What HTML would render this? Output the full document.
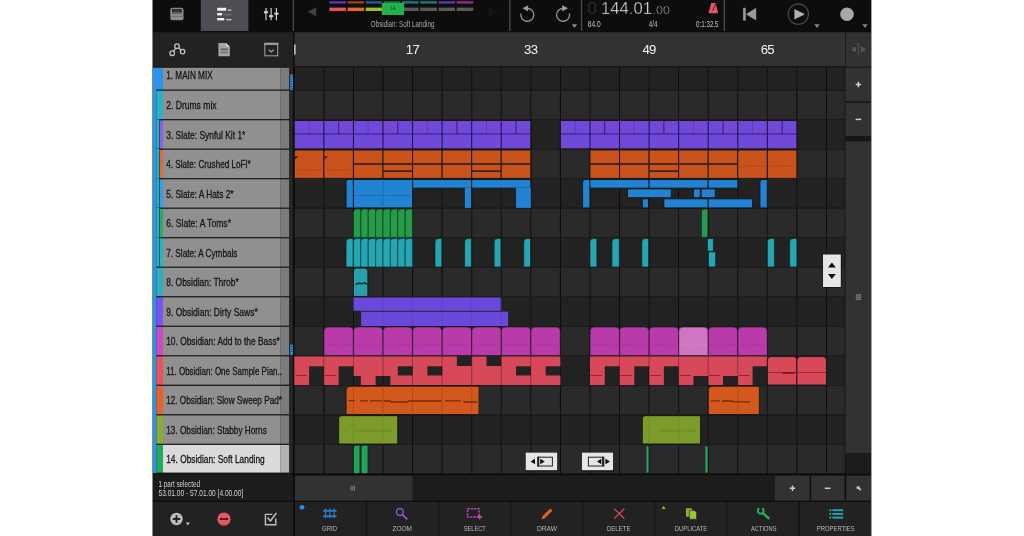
<!DOCTYPE html>
<html lang="en"><head><meta charset="utf-8"><title>Arrange</title>
<style>html,body{margin:0;padding:0;background:#fff;width:1024px;height:536px;overflow:hidden}svg{display:block;position:absolute;left:0;top:0}text{font-family:"Liberation Sans",sans-serif}</style>
</head><body>
<svg width="1024" height="536" viewBox="0 0 1024 536">
<defs><filter id="soft" x="0" y="0" width="1024" height="536" filterUnits="userSpaceOnUse"><feGaussianBlur stdDeviation="0.45"/></filter></defs>
<g filter="url(#soft)">
<rect x="0.00" y="0.00" width="1024.00" height="536.00" fill="#ffffff" />
<rect x="152.50" y="0.00" width="718.90" height="536.00" fill="#121212" />
<rect x="153.00" y="0.00" width="718.00" height="31.00" fill="#0a0a0a" />
<rect x="153.00" y="31.00" width="718.00" height="0.80" fill="#050505" />
<rect x="200.70" y="0.00" width="47.70" height="31.00" fill="#4e4e52" />
<rect x="292.70" y="0.00" width="1.40" height="31.00" fill="#4a4a4a" />
<rect x="509.10" y="0.00" width="1.40" height="31.00" fill="#4a4a4a" />
<rect x="580.80" y="0.00" width="1.40" height="31.00" fill="#4a4a4a" />
<rect x="723.60" y="0.00" width="1.40" height="31.00" fill="#4a4a4a" />
<g id="topicons">
<rect x="170.3" y="7.7" width="13.2" height="12.6" rx="2" fill="#8c8c8c"/>
<rect x="172.10" y="9.20" width="9.60" height="4.30" fill="#0b0b0b" />
<rect x="172.90" y="10.50" width="8.00" height="0.90" fill="#6e6e6e" />
<rect x="172.10" y="12.40" width="9.60" height="1.10" fill="#8c8c8c" />
<rect x="170.30" y="15.90" width="13.20" height="0.90" fill="#6a6a6a" />
<rect x="217.20" y="7.80" width="9.00" height="2.90" fill="#f2f2f2" />
<rect x="227.80" y="9.60" width="3.60" height="1.10" fill="#e0e0e0" />
<rect x="217.20" y="13.00" width="4.80" height="2.40" fill="#f2f2f2" />
<rect x="223.00" y="13.60" width="8.40" height="1.80" fill="#6a6a6e" />
<rect x="217.20" y="18.00" width="7.00" height="2.40" fill="#f2f2f2" />
<rect x="226.20" y="19.10" width="5.20" height="1.20" fill="#d8d8d8" />
<g stroke="#cfcfcf" stroke-width="1.2" fill="none"><path d="M266,7.9v12.4M271.1,7.9v12.4M276.4,7.9v12.4"/></g>
<g fill="#d4d4d4"><rect x="263.9" y="11.2" width="4.2" height="2.1"/><rect x="269" y="15.1" width="4.2" height="2.1"/><rect x="274.3" y="12.6" width="4.2" height="2.1"/></g>
</g>
<rect x="329.30" y="1.20" width="16.60" height="2.40" fill="#5a3aa8" />
<rect x="347.50" y="1.20" width="16.60" height="2.40" fill="#9a4516" />
<rect x="365.70" y="1.20" width="16.60" height="2.40" fill="#1b5f96" />
<rect x="383.90" y="1.20" width="16.60" height="2.40" fill="#1d7a3c" />
<rect x="402.10" y="1.20" width="16.60" height="2.40" fill="#1c7a80" />
<rect x="420.30" y="1.20" width="16.60" height="2.40" fill="#1c7a80" />
<rect x="438.50" y="1.20" width="16.60" height="2.40" fill="#5a3aa8" />
<rect x="456.70" y="1.20" width="16.60" height="2.40" fill="#8e2f82" />
<rect x="329.30" y="7.60" width="16.60" height="3.40" fill="#e8505f" />
<rect x="347.50" y="7.60" width="16.60" height="3.40" fill="#e8662a" />
<rect x="365.70" y="7.60" width="16.60" height="3.40" fill="#9dbf2a" />
<rect x="402.10" y="7.60" width="16.60" height="3.40" fill="#5a5a5a" />
<rect x="420.30" y="7.60" width="16.60" height="3.40" fill="#5a5a5a" />
<rect x="438.50" y="7.60" width="16.60" height="3.40" fill="#5a5a5a" />
<rect x="456.70" y="7.60" width="16.60" height="3.40" fill="#5a5a5a" />
<rect x="381.80" y="3.00" width="22.40" height="12.00" fill="#22b14c" />
<text x="393.00" y="10.30" font-size="4.5" fill="#0c4a22" text-anchor="middle" >14</text>
<path d="M316.2,7.4 v8.8 l-8.6,-4.4 z" fill="#424242"/>
<path d="M488.8,7.4 v8.8 l8.6,-4.4 z" fill="#191919"/>
<text x="370.80" y="27.10" font-size="8.8" fill="#acacac" text-anchor="start" textLength="63.6" lengthAdjust="spacingAndGlyphs" >Obsidian: Soft Landing</text>
<g fill="none" stroke="#9c9c9c" stroke-width="1.3">
<path d="M527.3,8.3 A6.5,6.5 0 1 1 520.95,13.5"/>
<path d="M563.1,8.3 A6.5,6.5 0 1 0 569.45,13.5"/>
</g>
<path d="M528.2,5.2 l-5.8,3.1 l5.8,3.1 z" fill="#9c9c9c"/>
<path d="M562.2,5.2 l5.8,3.1 l-5.8,3.1 z" fill="#9c9c9c"/>
<path d="M571.8,24.2 h5.4 l-2.7,3.9 z" fill="#8a8a8a"/>
<text x="587.40" y="14.00" font-size="16.6" fill="#404040" text-anchor="start" textLength="9.4" lengthAdjust="spacing" stroke="#0b0b0b" stroke-width="0.4">0</text>
<text x="601.00" y="14.00" font-size="16.6" fill="#e6e6e6" text-anchor="start" textLength="51.0" lengthAdjust="spacing" stroke="#0b0b0b" stroke-width="0.35">144.01</text>
<text x="652.60" y="14.00" font-size="10.4" fill="#a8a8a8" text-anchor="start" textLength="17.4" lengthAdjust="spacingAndGlyphs" stroke="#0b0b0b" stroke-width="0.3">.00</text>
<text x="587.80" y="27.40" font-size="8.2" fill="#c8c8c8" text-anchor="start" textLength="12.8" lengthAdjust="spacingAndGlyphs" >84.0</text>
<text x="648.80" y="27.40" font-size="8.2" fill="#c8c8c8" text-anchor="start" textLength="8.6" lengthAdjust="spacingAndGlyphs" >4/4</text>
<text x="696.00" y="27.40" font-size="8.2" fill="#c8c8c8" text-anchor="start" textLength="22.6" lengthAdjust="spacingAndGlyphs" >0:1:32.5</text>
<path d="M711.2,3.1 h4.4 l2.6,10.2 h-9.8 z" fill="#ea5260"/>
<path d="M712.6,10.6 l3.2,-6.8" stroke="#3a1015" stroke-width="0.9"/>
<g fill="#9a9a9a"><rect x="743.1" y="7.8" width="2.6" height="12.8"/><path d="M756.2,7.8 v12.8 l-10.4,-6.4 z"/></g>
<circle cx="798.3" cy="14.1" r="10.2" fill="none" stroke="#4c4c4c" stroke-width="1.1"/>
<path d="M794.4,9 v10.4 l10.6,-5.2 z" fill="#b0b0b0"/>
<path d="M814.3,24.2 h5.4 l-2.7,3.9 z" fill="#8a8a8a"/>
<circle cx="847" cy="14.2" r="6.8" fill="#a8a8a8"/>
<path d="M862.3,24.2 h5.4 l-2.7,3.9 z" fill="#8a8a8a"/>
<rect x="153.00" y="32.20" width="140.20" height="34.80" fill="#222222" />
<rect x="293.00" y="31.80" width="1.50" height="35.40" fill="#080808" />
<rect x="294.50" y="32.20" width="550.50" height="34.80" fill="#303030" />
<rect x="845.60" y="32.20" width="25.40" height="34.80" fill="#323232" />
<g fill="none" stroke="#c0c0c0" stroke-width="1.3"><circle cx="172.2" cy="53.2" r="2.3"/><circle cx="177" cy="46.2" r="2.3"/><circle cx="182.6" cy="51.6" r="2.3"/><path d="M173.5,51.3 L175.7,48.1 M178.6,47.8 L181,50"/></g>
<path d="M218.4,43 h7.6 l3.8,3.4 v9.9 h-11.4 z" fill="#a4a4a4"/>
<rect x="220.40" y="48.60" width="7.40" height="1.70" fill="#5c5c5c" />
<rect x="220.40" y="51.60" width="7.40" height="1.70" fill="#707070" />
<path d="M226,43 v3.4 h3.8 z" fill="#d0d0d0"/>
<rect x="264.8" y="43.4" width="12.9" height="12.4" fill="none" stroke="#9a9a9a" stroke-width="1.1"/>
<rect x="264.30" y="42.80" width="13.90" height="2.20" fill="#9a9a9a" />
<path d="M268.7,49.6 l2.6,2.4 l2.6,-2.4" fill="none" stroke="#b0b0b0" stroke-width="1.1"/>
<rect x="294.00" y="44.50" width="1.70" height="10.20" fill="#b8b8b8" />
<text x="412.86" y="54.40" font-size="13.2" fill="#f4f4f4" text-anchor="middle" textLength="14.0" lengthAdjust="spacing" >17</text>
<text x="531.12" y="54.40" font-size="13.2" fill="#f4f4f4" text-anchor="middle" textLength="14.0" lengthAdjust="spacing" >33</text>
<text x="649.38" y="54.40" font-size="13.2" fill="#f4f4f4" text-anchor="middle" textLength="14.0" lengthAdjust="spacing" >49</text>
<text x="767.64" y="54.40" font-size="13.2" fill="#f4f4f4" text-anchor="middle" textLength="14.0" lengthAdjust="spacing" >65</text>
<rect x="852.40" y="47.20" width="3.60" height="4.20" fill="#555" />
<rect x="857.80" y="43.00" width="1.10" height="12.20" fill="#555" />
<path d="M860.8,45.8 v7.2 l5.2,-3.6 z" fill="#555"/>
<rect x="153.00" y="66.60" width="141.50" height="407.00" fill="#1c1c1c" />
<rect x="163.00" y="67.80" width="117.50" height="21.68" fill="#909090" />
<rect x="280.40" y="67.80" width="8.90" height="21.68" fill="#7c7c7c" />
<rect x="153.00" y="67.80" width="10.00" height="21.68" fill="#2b93ea" />
<text x="166.20" y="79.48" font-size="11.2" fill="#161616" text-anchor="start" textLength="46.5" lengthAdjust="spacingAndGlyphs" stroke="#161616" stroke-width="0.3">1. MAIN MIX</text>
<rect x="163.00" y="90.79" width="117.50" height="28.21" fill="#909090" />
<rect x="280.40" y="90.79" width="8.90" height="28.21" fill="#7c7c7c" />
<rect x="156.30" y="90.79" width="6.70" height="28.21" fill="#27b3c2" />
<text x="166.20" y="108.99" font-size="11.2" fill="#161616" text-anchor="start" textLength="50.4" lengthAdjust="spacingAndGlyphs" stroke="#161616" stroke-width="0.3">2. Drums mix</text>
<rect x="163.00" y="120.30" width="117.50" height="28.22" fill="#909090" />
<rect x="280.40" y="120.30" width="8.90" height="28.22" fill="#7c7c7c" />
<rect x="156.30" y="119.30" width="3.00" height="29.22" fill="#27b3c2" />
<rect x="159.80" y="120.30" width="3.20" height="28.22" fill="#8a5fea" />
<text x="166.20" y="138.51" font-size="11.2" fill="#161616" text-anchor="start" textLength="79.2" lengthAdjust="spacingAndGlyphs" stroke="#161616" stroke-width="0.3">3. Slate: Synful Kit 1*</text>
<rect x="163.00" y="149.82" width="117.50" height="28.21" fill="#909090" />
<rect x="280.40" y="149.82" width="8.90" height="28.21" fill="#7c7c7c" />
<rect x="156.30" y="148.82" width="3.00" height="29.21" fill="#27b3c2" />
<rect x="159.80" y="149.82" width="3.20" height="28.21" fill="#d9673a" />
<text x="166.20" y="168.02" font-size="11.2" fill="#161616" text-anchor="start" textLength="84.4" lengthAdjust="spacingAndGlyphs" stroke="#161616" stroke-width="0.3">4. Slate: Crushed LoFi*</text>
<rect x="163.00" y="179.33" width="117.50" height="28.21" fill="#909090" />
<rect x="280.40" y="179.33" width="8.90" height="28.21" fill="#7c7c7c" />
<rect x="156.30" y="178.33" width="3.00" height="29.21" fill="#27b3c2" />
<rect x="159.80" y="179.33" width="3.20" height="28.21" fill="#3c9be8" />
<text x="166.20" y="197.54" font-size="11.2" fill="#161616" text-anchor="start" textLength="67.4" lengthAdjust="spacingAndGlyphs" stroke="#161616" stroke-width="0.3">5. Slate: A Hats 2*</text>
<rect x="163.00" y="208.84" width="117.50" height="28.22" fill="#909090" />
<rect x="280.40" y="208.84" width="8.90" height="28.22" fill="#7c7c7c" />
<rect x="156.30" y="207.84" width="3.00" height="29.22" fill="#27b3c2" />
<rect x="159.80" y="208.84" width="3.20" height="28.22" fill="#2fa862" />
<text x="166.20" y="227.05" font-size="11.2" fill="#161616" text-anchor="start" textLength="64.8" lengthAdjust="spacingAndGlyphs" stroke="#161616" stroke-width="0.3">6. Slate: A Toms*</text>
<rect x="163.00" y="238.36" width="117.50" height="28.22" fill="#909090" />
<rect x="280.40" y="238.36" width="8.90" height="28.22" fill="#7c7c7c" />
<rect x="156.30" y="237.36" width="3.00" height="29.22" fill="#27b3c2" />
<rect x="159.80" y="238.36" width="3.20" height="28.22" fill="#27b3c2" />
<text x="166.20" y="256.57" font-size="11.2" fill="#161616" text-anchor="start" textLength="71.3" lengthAdjust="spacingAndGlyphs" stroke="#161616" stroke-width="0.3">7. Slate: A Cymbals</text>
<rect x="163.00" y="267.88" width="117.50" height="28.22" fill="#909090" />
<rect x="280.40" y="267.88" width="8.90" height="28.22" fill="#7c7c7c" />
<rect x="156.30" y="267.88" width="6.70" height="28.22" fill="#2ab0bc" />
<text x="166.20" y="286.08" font-size="11.2" fill="#161616" text-anchor="start" textLength="72.6" lengthAdjust="spacingAndGlyphs" stroke="#161616" stroke-width="0.3">8. Obsidian: Throb*</text>
<rect x="163.00" y="297.39" width="117.50" height="28.22" fill="#909090" />
<rect x="280.40" y="297.39" width="8.90" height="28.22" fill="#7c7c7c" />
<rect x="156.30" y="297.39" width="6.70" height="28.22" fill="#7a52f0" />
<text x="166.20" y="315.60" font-size="11.2" fill="#161616" text-anchor="start" textLength="91.5" lengthAdjust="spacingAndGlyphs" stroke="#161616" stroke-width="0.3">9. Obsidian: Dirty Saws*</text>
<rect x="163.00" y="326.90" width="117.50" height="28.22" fill="#909090" />
<rect x="280.40" y="326.90" width="8.90" height="28.22" fill="#7c7c7c" />
<rect x="156.30" y="326.90" width="6.70" height="28.22" fill="#d04ac2" />
<text x="166.20" y="345.11" font-size="11.2" fill="#161616" text-anchor="start" textLength="113.7" lengthAdjust="spacingAndGlyphs" stroke="#161616" stroke-width="0.3">10. Obsidian: Add to the Bass*</text>
<rect x="163.00" y="356.42" width="117.50" height="28.22" fill="#909090" />
<rect x="280.40" y="356.42" width="8.90" height="28.22" fill="#7c7c7c" />
<rect x="156.30" y="356.42" width="6.70" height="28.22" fill="#e8525f" />
<text x="166.20" y="374.63" font-size="11.2" fill="#161616" text-anchor="start" textLength="115.8" lengthAdjust="spacingAndGlyphs" stroke="#161616" stroke-width="0.3">11. Obsidian: One Sample Pian..</text>
<rect x="163.00" y="385.93" width="117.50" height="28.22" fill="#909090" />
<rect x="280.40" y="385.93" width="8.90" height="28.22" fill="#7c7c7c" />
<rect x="156.30" y="385.93" width="6.70" height="28.22" fill="#e86224" />
<text x="166.20" y="404.14" font-size="11.2" fill="#161616" text-anchor="start" textLength="115.8" lengthAdjust="spacingAndGlyphs" stroke="#161616" stroke-width="0.3">12. Obsidian: Slow Sweep Pad*</text>
<rect x="163.00" y="415.45" width="117.50" height="28.22" fill="#909090" />
<rect x="280.40" y="415.45" width="8.90" height="28.22" fill="#7c7c7c" />
<rect x="156.30" y="415.45" width="6.70" height="28.22" fill="#8cab32" />
<text x="166.20" y="433.66" font-size="11.2" fill="#161616" text-anchor="start" textLength="100.6" lengthAdjust="spacingAndGlyphs" stroke="#161616" stroke-width="0.3">13. Obsidian: Stabby Horns</text>
<rect x="163.00" y="444.97" width="117.50" height="27.58" fill="#dadada" />
<rect x="280.40" y="444.97" width="8.90" height="27.58" fill="#b2b2b2" />
<rect x="156.30" y="444.97" width="6.70" height="27.58" fill="#22aa5a" />
<text x="166.20" y="462.86" font-size="11.2" fill="#161616" text-anchor="start" textLength="98.5" lengthAdjust="spacingAndGlyphs" stroke="#161616" stroke-width="0.3">14. Obsidian: Soft Landing</text>
<rect x="153.00" y="67.80" width="3.30" height="405.40" fill="#2b93ea" />
<rect x="289.30" y="66.60" width="3.80" height="407.00" fill="#242424" />
<rect x="293.00" y="66.60" width="1.50" height="407.00" fill="#080808" />
<rect x="290.40" y="68.00" width="1.60" height="1.30" fill="#333333" />
<rect x="290.40" y="71.00" width="1.60" height="1.30" fill="#333333" />
<rect x="290.40" y="74.00" width="1.60" height="1.30" fill="#333333" />
<rect x="290.40" y="77.00" width="1.60" height="1.30" fill="#333333" />
<rect x="290.40" y="80.00" width="1.60" height="1.30" fill="#333333" />
<rect x="290.40" y="83.00" width="1.60" height="1.30" fill="#333333" />
<rect x="290.40" y="86.00" width="1.60" height="1.30" fill="#333333" />
<rect x="290.40" y="89.00" width="1.60" height="1.30" fill="#333333" />
<rect x="290.40" y="92.00" width="1.60" height="1.30" fill="#333333" />
<rect x="290.40" y="95.00" width="1.60" height="1.30" fill="#333333" />
<rect x="290.40" y="98.00" width="1.60" height="1.30" fill="#333333" />
<rect x="290.40" y="101.00" width="1.60" height="1.30" fill="#333333" />
<rect x="290.40" y="104.00" width="1.60" height="1.30" fill="#333333" />
<rect x="290.40" y="107.00" width="1.60" height="1.30" fill="#333333" />
<rect x="290.40" y="110.00" width="1.60" height="1.30" fill="#333333" />
<rect x="290.40" y="113.00" width="1.60" height="1.30" fill="#333333" />
<rect x="290.40" y="116.00" width="1.60" height="1.30" fill="#333333" />
<rect x="290.40" y="119.00" width="1.60" height="1.30" fill="#333333" />
<rect x="290.40" y="122.00" width="1.60" height="1.30" fill="#333333" />
<rect x="290.40" y="125.00" width="1.60" height="1.30" fill="#333333" />
<rect x="290.40" y="128.00" width="1.60" height="1.30" fill="#333333" />
<rect x="290.40" y="131.00" width="1.60" height="1.30" fill="#333333" />
<rect x="290.40" y="134.00" width="1.60" height="1.30" fill="#333333" />
<rect x="290.40" y="137.00" width="1.60" height="1.30" fill="#333333" />
<rect x="290.40" y="140.00" width="1.60" height="1.30" fill="#333333" />
<rect x="290.40" y="143.00" width="1.60" height="1.30" fill="#333333" />
<rect x="290.40" y="146.00" width="1.60" height="1.30" fill="#333333" />
<rect x="290.40" y="149.00" width="1.60" height="1.30" fill="#333333" />
<rect x="290.40" y="152.00" width="1.60" height="1.30" fill="#333333" />
<rect x="290.40" y="155.00" width="1.60" height="1.30" fill="#333333" />
<rect x="290.40" y="158.00" width="1.60" height="1.30" fill="#333333" />
<rect x="290.40" y="161.00" width="1.60" height="1.30" fill="#333333" />
<rect x="290.40" y="164.00" width="1.60" height="1.30" fill="#333333" />
<rect x="290.40" y="167.00" width="1.60" height="1.30" fill="#333333" />
<rect x="290.40" y="170.00" width="1.60" height="1.30" fill="#333333" />
<rect x="290.40" y="173.00" width="1.60" height="1.30" fill="#333333" />
<rect x="290.40" y="176.00" width="1.60" height="1.30" fill="#333333" />
<rect x="290.40" y="179.00" width="1.60" height="1.30" fill="#333333" />
<rect x="290.40" y="182.00" width="1.60" height="1.30" fill="#333333" />
<rect x="290.40" y="185.00" width="1.60" height="1.30" fill="#333333" />
<rect x="290.40" y="188.00" width="1.60" height="1.30" fill="#333333" />
<rect x="290.40" y="191.00" width="1.60" height="1.30" fill="#333333" />
<rect x="290.40" y="194.00" width="1.60" height="1.30" fill="#333333" />
<rect x="290.40" y="197.00" width="1.60" height="1.30" fill="#333333" />
<rect x="290.40" y="200.00" width="1.60" height="1.30" fill="#333333" />
<rect x="290.40" y="203.00" width="1.60" height="1.30" fill="#333333" />
<rect x="290.40" y="206.00" width="1.60" height="1.30" fill="#333333" />
<rect x="290.40" y="209.00" width="1.60" height="1.30" fill="#333333" />
<rect x="290.40" y="212.00" width="1.60" height="1.30" fill="#333333" />
<rect x="290.40" y="215.00" width="1.60" height="1.30" fill="#333333" />
<rect x="290.40" y="218.00" width="1.60" height="1.30" fill="#333333" />
<rect x="290.40" y="221.00" width="1.60" height="1.30" fill="#333333" />
<rect x="290.40" y="224.00" width="1.60" height="1.30" fill="#333333" />
<rect x="290.40" y="227.00" width="1.60" height="1.30" fill="#333333" />
<rect x="290.40" y="230.00" width="1.60" height="1.30" fill="#333333" />
<rect x="290.40" y="233.00" width="1.60" height="1.30" fill="#333333" />
<rect x="290.40" y="236.00" width="1.60" height="1.30" fill="#333333" />
<rect x="290.40" y="239.00" width="1.60" height="1.30" fill="#333333" />
<rect x="290.40" y="242.00" width="1.60" height="1.30" fill="#333333" />
<rect x="290.40" y="245.00" width="1.60" height="1.30" fill="#333333" />
<rect x="290.40" y="248.00" width="1.60" height="1.30" fill="#333333" />
<rect x="290.40" y="251.00" width="1.60" height="1.30" fill="#333333" />
<rect x="290.40" y="254.00" width="1.60" height="1.30" fill="#333333" />
<rect x="290.40" y="257.00" width="1.60" height="1.30" fill="#333333" />
<rect x="290.40" y="260.00" width="1.60" height="1.30" fill="#333333" />
<rect x="290.40" y="263.00" width="1.60" height="1.30" fill="#333333" />
<rect x="290.40" y="266.00" width="1.60" height="1.30" fill="#333333" />
<rect x="290.40" y="269.00" width="1.60" height="1.30" fill="#333333" />
<rect x="290.40" y="272.00" width="1.60" height="1.30" fill="#333333" />
<rect x="290.40" y="275.00" width="1.60" height="1.30" fill="#333333" />
<rect x="290.40" y="278.00" width="1.60" height="1.30" fill="#333333" />
<rect x="290.40" y="281.00" width="1.60" height="1.30" fill="#333333" />
<rect x="290.40" y="284.00" width="1.60" height="1.30" fill="#333333" />
<rect x="290.40" y="287.00" width="1.60" height="1.30" fill="#333333" />
<rect x="290.40" y="290.00" width="1.60" height="1.30" fill="#333333" />
<rect x="290.40" y="293.00" width="1.60" height="1.30" fill="#333333" />
<rect x="290.40" y="296.00" width="1.60" height="1.30" fill="#333333" />
<rect x="290.40" y="299.00" width="1.60" height="1.30" fill="#333333" />
<rect x="290.40" y="302.00" width="1.60" height="1.30" fill="#333333" />
<rect x="290.40" y="305.00" width="1.60" height="1.30" fill="#333333" />
<rect x="290.40" y="308.00" width="1.60" height="1.30" fill="#333333" />
<rect x="290.40" y="311.00" width="1.60" height="1.30" fill="#333333" />
<rect x="290.40" y="314.00" width="1.60" height="1.30" fill="#333333" />
<rect x="290.40" y="317.00" width="1.60" height="1.30" fill="#333333" />
<rect x="290.40" y="320.00" width="1.60" height="1.30" fill="#333333" />
<rect x="290.40" y="323.00" width="1.60" height="1.30" fill="#333333" />
<rect x="290.40" y="326.00" width="1.60" height="1.30" fill="#333333" />
<rect x="290.40" y="329.00" width="1.60" height="1.30" fill="#333333" />
<rect x="290.40" y="332.00" width="1.60" height="1.30" fill="#333333" />
<rect x="290.40" y="335.00" width="1.60" height="1.30" fill="#333333" />
<rect x="290.40" y="338.00" width="1.60" height="1.30" fill="#333333" />
<rect x="290.40" y="341.00" width="1.60" height="1.30" fill="#333333" />
<rect x="290.40" y="344.00" width="1.60" height="1.30" fill="#333333" />
<rect x="290.40" y="347.00" width="1.60" height="1.30" fill="#333333" />
<rect x="290.40" y="350.00" width="1.60" height="1.30" fill="#333333" />
<rect x="290.40" y="353.00" width="1.60" height="1.30" fill="#333333" />
<rect x="290.40" y="356.00" width="1.60" height="1.30" fill="#333333" />
<rect x="290.40" y="359.00" width="1.60" height="1.30" fill="#333333" />
<rect x="290.40" y="362.00" width="1.60" height="1.30" fill="#333333" />
<rect x="290.40" y="365.00" width="1.60" height="1.30" fill="#333333" />
<rect x="290.40" y="368.00" width="1.60" height="1.30" fill="#333333" />
<rect x="290.40" y="371.00" width="1.60" height="1.30" fill="#333333" />
<rect x="290.40" y="374.00" width="1.60" height="1.30" fill="#333333" />
<rect x="290.40" y="377.00" width="1.60" height="1.30" fill="#333333" />
<rect x="290.40" y="380.00" width="1.60" height="1.30" fill="#333333" />
<rect x="290.40" y="383.00" width="1.60" height="1.30" fill="#333333" />
<rect x="290.40" y="386.00" width="1.60" height="1.30" fill="#333333" />
<rect x="290.40" y="389.00" width="1.60" height="1.30" fill="#333333" />
<rect x="290.40" y="392.00" width="1.60" height="1.30" fill="#333333" />
<rect x="290.40" y="395.00" width="1.60" height="1.30" fill="#333333" />
<rect x="290.40" y="398.00" width="1.60" height="1.30" fill="#333333" />
<rect x="290.40" y="401.00" width="1.60" height="1.30" fill="#333333" />
<rect x="290.40" y="404.00" width="1.60" height="1.30" fill="#333333" />
<rect x="290.40" y="407.00" width="1.60" height="1.30" fill="#333333" />
<rect x="290.40" y="410.00" width="1.60" height="1.30" fill="#333333" />
<rect x="290.40" y="413.00" width="1.60" height="1.30" fill="#333333" />
<rect x="290.40" y="416.00" width="1.60" height="1.30" fill="#333333" />
<rect x="290.40" y="419.00" width="1.60" height="1.30" fill="#333333" />
<rect x="290.40" y="422.00" width="1.60" height="1.30" fill="#333333" />
<rect x="290.40" y="425.00" width="1.60" height="1.30" fill="#333333" />
<rect x="290.40" y="428.00" width="1.60" height="1.30" fill="#333333" />
<rect x="290.40" y="431.00" width="1.60" height="1.30" fill="#333333" />
<rect x="290.40" y="434.00" width="1.60" height="1.30" fill="#333333" />
<rect x="290.40" y="437.00" width="1.60" height="1.30" fill="#333333" />
<rect x="290.40" y="440.00" width="1.60" height="1.30" fill="#333333" />
<rect x="290.40" y="443.00" width="1.60" height="1.30" fill="#333333" />
<rect x="290.40" y="446.00" width="1.60" height="1.30" fill="#333333" />
<rect x="290.40" y="449.00" width="1.60" height="1.30" fill="#333333" />
<rect x="290.40" y="452.00" width="1.60" height="1.30" fill="#333333" />
<rect x="290.40" y="455.00" width="1.60" height="1.30" fill="#333333" />
<rect x="290.40" y="458.00" width="1.60" height="1.30" fill="#333333" />
<rect x="290.40" y="461.00" width="1.60" height="1.30" fill="#333333" />
<rect x="290.40" y="464.00" width="1.60" height="1.30" fill="#333333" />
<rect x="290.40" y="467.00" width="1.60" height="1.30" fill="#333333" />
<rect x="290.40" y="470.00" width="1.60" height="1.30" fill="#333333" />
<rect x="290.20" y="74.60" width="2.80" height="15.40" fill="#2a8fe0" />
<rect x="290.20" y="76.10" width="2.80" height="0.70" fill="#14507e" />
<rect x="290.20" y="78.60" width="2.80" height="0.70" fill="#14507e" />
<rect x="290.20" y="81.10" width="2.80" height="0.70" fill="#14507e" />
<rect x="290.20" y="83.60" width="2.80" height="0.70" fill="#14507e" />
<rect x="290.20" y="86.10" width="2.80" height="0.70" fill="#14507e" />
<rect x="290.20" y="88.60" width="2.80" height="0.70" fill="#14507e" />
<rect x="290.20" y="344.80" width="2.80" height="10.00" fill="#2a8fe0" />
<rect x="290.20" y="346.30" width="2.80" height="0.70" fill="#14507e" />
<rect x="290.20" y="348.80" width="2.80" height="0.70" fill="#14507e" />
<rect x="290.20" y="351.30" width="2.80" height="0.70" fill="#14507e" />
<rect x="294.50" y="66.60" width="550.50" height="406.60" fill="#101010" />
<rect x="294.50" y="66.60" width="550.50" height="1.00" fill="#0a0a0a" />
<rect x="294.85" y="67.25" width="28.46" height="22.94" fill="#242424" />
<rect x="324.42" y="67.25" width="28.46" height="22.94" fill="#242424" />
<rect x="353.98" y="67.25" width="28.46" height="22.94" fill="#242424" />
<rect x="383.55" y="67.25" width="28.46" height="22.94" fill="#242424" />
<rect x="413.11" y="67.25" width="28.46" height="22.94" fill="#242424" />
<rect x="442.68" y="67.25" width="28.47" height="22.94" fill="#242424" />
<rect x="472.24" y="67.25" width="28.46" height="22.94" fill="#242424" />
<rect x="501.81" y="67.25" width="28.47" height="22.94" fill="#242424" />
<rect x="531.37" y="67.25" width="28.47" height="22.94" fill="#242424" />
<rect x="560.93" y="67.25" width="28.47" height="22.94" fill="#242424" />
<rect x="590.50" y="67.25" width="28.47" height="22.94" fill="#242424" />
<rect x="620.07" y="67.25" width="28.47" height="22.94" fill="#242424" />
<rect x="649.63" y="67.25" width="28.47" height="22.94" fill="#242424" />
<rect x="679.19" y="67.25" width="28.47" height="22.94" fill="#242424" />
<rect x="708.76" y="67.25" width="28.47" height="22.94" fill="#242424" />
<rect x="738.33" y="67.25" width="28.47" height="22.94" fill="#242424" />
<rect x="767.89" y="67.25" width="28.47" height="22.94" fill="#242424" />
<rect x="797.45" y="67.25" width="28.47" height="22.94" fill="#242424" />
<rect x="827.02" y="67.25" width="17.68" height="22.94" fill="#242424" />
<rect x="294.85" y="90.09" width="28.46" height="29.62" fill="#2c2c2c" />
<rect x="324.42" y="90.09" width="28.46" height="29.62" fill="#2c2c2c" />
<rect x="353.98" y="90.09" width="28.46" height="29.62" fill="#2c2c2c" />
<rect x="383.55" y="90.09" width="28.46" height="29.62" fill="#2c2c2c" />
<rect x="413.11" y="90.09" width="28.46" height="29.62" fill="#2c2c2c" />
<rect x="442.68" y="90.09" width="28.47" height="29.62" fill="#2c2c2c" />
<rect x="472.24" y="90.09" width="28.46" height="29.62" fill="#2c2c2c" />
<rect x="501.81" y="90.09" width="28.47" height="29.62" fill="#2c2c2c" />
<rect x="531.37" y="90.09" width="28.47" height="29.62" fill="#2c2c2c" />
<rect x="560.93" y="90.09" width="28.47" height="29.62" fill="#2c2c2c" />
<rect x="590.50" y="90.09" width="28.47" height="29.62" fill="#2c2c2c" />
<rect x="620.07" y="90.09" width="28.47" height="29.62" fill="#2c2c2c" />
<rect x="649.63" y="90.09" width="28.47" height="29.62" fill="#2c2c2c" />
<rect x="679.19" y="90.09" width="28.47" height="29.62" fill="#2c2c2c" />
<rect x="708.76" y="90.09" width="28.47" height="29.62" fill="#2c2c2c" />
<rect x="738.33" y="90.09" width="28.47" height="29.62" fill="#2c2c2c" />
<rect x="767.89" y="90.09" width="28.47" height="29.62" fill="#2c2c2c" />
<rect x="797.45" y="90.09" width="28.47" height="29.62" fill="#2c2c2c" />
<rect x="827.02" y="90.09" width="17.68" height="29.62" fill="#2c2c2c" />
<rect x="294.85" y="119.60" width="28.46" height="29.62" fill="#242424" />
<rect x="324.42" y="119.60" width="28.46" height="29.62" fill="#242424" />
<rect x="353.98" y="119.60" width="28.46" height="29.62" fill="#242424" />
<rect x="383.55" y="119.60" width="28.46" height="29.62" fill="#242424" />
<rect x="413.11" y="119.60" width="28.46" height="29.62" fill="#242424" />
<rect x="442.68" y="119.60" width="28.47" height="29.62" fill="#242424" />
<rect x="472.24" y="119.60" width="28.46" height="29.62" fill="#242424" />
<rect x="501.81" y="119.60" width="28.47" height="29.62" fill="#242424" />
<rect x="531.37" y="119.60" width="28.47" height="29.62" fill="#242424" />
<rect x="560.93" y="119.60" width="28.47" height="29.62" fill="#242424" />
<rect x="590.50" y="119.60" width="28.47" height="29.62" fill="#242424" />
<rect x="620.07" y="119.60" width="28.47" height="29.62" fill="#242424" />
<rect x="649.63" y="119.60" width="28.47" height="29.62" fill="#242424" />
<rect x="679.19" y="119.60" width="28.47" height="29.62" fill="#242424" />
<rect x="708.76" y="119.60" width="28.47" height="29.62" fill="#242424" />
<rect x="738.33" y="119.60" width="28.47" height="29.62" fill="#242424" />
<rect x="767.89" y="119.60" width="28.47" height="29.62" fill="#242424" />
<rect x="797.45" y="119.60" width="28.47" height="29.62" fill="#242424" />
<rect x="827.02" y="119.60" width="17.68" height="29.62" fill="#242424" />
<rect x="294.85" y="149.12" width="28.46" height="29.61" fill="#2c2c2c" />
<rect x="324.42" y="149.12" width="28.46" height="29.61" fill="#2c2c2c" />
<rect x="353.98" y="149.12" width="28.46" height="29.61" fill="#2c2c2c" />
<rect x="383.55" y="149.12" width="28.46" height="29.61" fill="#2c2c2c" />
<rect x="413.11" y="149.12" width="28.46" height="29.61" fill="#2c2c2c" />
<rect x="442.68" y="149.12" width="28.47" height="29.61" fill="#2c2c2c" />
<rect x="472.24" y="149.12" width="28.46" height="29.61" fill="#2c2c2c" />
<rect x="501.81" y="149.12" width="28.47" height="29.61" fill="#2c2c2c" />
<rect x="531.37" y="149.12" width="28.47" height="29.61" fill="#2c2c2c" />
<rect x="560.93" y="149.12" width="28.47" height="29.61" fill="#2c2c2c" />
<rect x="590.50" y="149.12" width="28.47" height="29.61" fill="#2c2c2c" />
<rect x="620.07" y="149.12" width="28.47" height="29.61" fill="#2c2c2c" />
<rect x="649.63" y="149.12" width="28.47" height="29.61" fill="#2c2c2c" />
<rect x="679.19" y="149.12" width="28.47" height="29.61" fill="#2c2c2c" />
<rect x="708.76" y="149.12" width="28.47" height="29.61" fill="#2c2c2c" />
<rect x="738.33" y="149.12" width="28.47" height="29.61" fill="#2c2c2c" />
<rect x="767.89" y="149.12" width="28.47" height="29.61" fill="#2c2c2c" />
<rect x="797.45" y="149.12" width="28.47" height="29.61" fill="#2c2c2c" />
<rect x="827.02" y="149.12" width="17.68" height="29.61" fill="#2c2c2c" />
<rect x="294.85" y="178.63" width="28.46" height="29.61" fill="#242424" />
<rect x="324.42" y="178.63" width="28.46" height="29.61" fill="#242424" />
<rect x="353.98" y="178.63" width="28.46" height="29.61" fill="#242424" />
<rect x="383.55" y="178.63" width="28.46" height="29.61" fill="#242424" />
<rect x="413.11" y="178.63" width="28.46" height="29.61" fill="#242424" />
<rect x="442.68" y="178.63" width="28.47" height="29.61" fill="#242424" />
<rect x="472.24" y="178.63" width="28.46" height="29.61" fill="#242424" />
<rect x="501.81" y="178.63" width="28.47" height="29.61" fill="#242424" />
<rect x="531.37" y="178.63" width="28.47" height="29.61" fill="#242424" />
<rect x="560.93" y="178.63" width="28.47" height="29.61" fill="#242424" />
<rect x="590.50" y="178.63" width="28.47" height="29.61" fill="#242424" />
<rect x="620.07" y="178.63" width="28.47" height="29.61" fill="#242424" />
<rect x="649.63" y="178.63" width="28.47" height="29.61" fill="#242424" />
<rect x="679.19" y="178.63" width="28.47" height="29.61" fill="#242424" />
<rect x="708.76" y="178.63" width="28.47" height="29.61" fill="#242424" />
<rect x="738.33" y="178.63" width="28.47" height="29.61" fill="#242424" />
<rect x="767.89" y="178.63" width="28.47" height="29.61" fill="#242424" />
<rect x="797.45" y="178.63" width="28.47" height="29.61" fill="#242424" />
<rect x="827.02" y="178.63" width="17.68" height="29.61" fill="#242424" />
<rect x="294.85" y="208.15" width="28.46" height="29.61" fill="#2c2c2c" />
<rect x="324.42" y="208.15" width="28.46" height="29.61" fill="#2c2c2c" />
<rect x="353.98" y="208.15" width="28.46" height="29.61" fill="#2c2c2c" />
<rect x="383.55" y="208.15" width="28.46" height="29.61" fill="#2c2c2c" />
<rect x="413.11" y="208.15" width="28.46" height="29.61" fill="#2c2c2c" />
<rect x="442.68" y="208.15" width="28.47" height="29.61" fill="#2c2c2c" />
<rect x="472.24" y="208.15" width="28.46" height="29.61" fill="#2c2c2c" />
<rect x="501.81" y="208.15" width="28.47" height="29.61" fill="#2c2c2c" />
<rect x="531.37" y="208.15" width="28.47" height="29.61" fill="#2c2c2c" />
<rect x="560.93" y="208.15" width="28.47" height="29.61" fill="#2c2c2c" />
<rect x="590.50" y="208.15" width="28.47" height="29.61" fill="#2c2c2c" />
<rect x="620.07" y="208.15" width="28.47" height="29.61" fill="#2c2c2c" />
<rect x="649.63" y="208.15" width="28.47" height="29.61" fill="#2c2c2c" />
<rect x="679.19" y="208.15" width="28.47" height="29.61" fill="#2c2c2c" />
<rect x="708.76" y="208.15" width="28.47" height="29.61" fill="#2c2c2c" />
<rect x="738.33" y="208.15" width="28.47" height="29.61" fill="#2c2c2c" />
<rect x="767.89" y="208.15" width="28.47" height="29.61" fill="#2c2c2c" />
<rect x="797.45" y="208.15" width="28.47" height="29.61" fill="#2c2c2c" />
<rect x="827.02" y="208.15" width="17.68" height="29.61" fill="#2c2c2c" />
<rect x="294.85" y="237.66" width="28.46" height="29.61" fill="#242424" />
<rect x="324.42" y="237.66" width="28.46" height="29.61" fill="#242424" />
<rect x="353.98" y="237.66" width="28.46" height="29.61" fill="#242424" />
<rect x="383.55" y="237.66" width="28.46" height="29.61" fill="#242424" />
<rect x="413.11" y="237.66" width="28.46" height="29.61" fill="#242424" />
<rect x="442.68" y="237.66" width="28.47" height="29.61" fill="#242424" />
<rect x="472.24" y="237.66" width="28.46" height="29.61" fill="#242424" />
<rect x="501.81" y="237.66" width="28.47" height="29.61" fill="#242424" />
<rect x="531.37" y="237.66" width="28.47" height="29.61" fill="#242424" />
<rect x="560.93" y="237.66" width="28.47" height="29.61" fill="#242424" />
<rect x="590.50" y="237.66" width="28.47" height="29.61" fill="#242424" />
<rect x="620.07" y="237.66" width="28.47" height="29.61" fill="#242424" />
<rect x="649.63" y="237.66" width="28.47" height="29.61" fill="#242424" />
<rect x="679.19" y="237.66" width="28.47" height="29.61" fill="#242424" />
<rect x="708.76" y="237.66" width="28.47" height="29.61" fill="#242424" />
<rect x="738.33" y="237.66" width="28.47" height="29.61" fill="#242424" />
<rect x="767.89" y="237.66" width="28.47" height="29.61" fill="#242424" />
<rect x="797.45" y="237.66" width="28.47" height="29.61" fill="#242424" />
<rect x="827.02" y="237.66" width="17.68" height="29.61" fill="#242424" />
<rect x="294.85" y="267.18" width="28.46" height="29.61" fill="#2c2c2c" />
<rect x="324.42" y="267.18" width="28.46" height="29.61" fill="#2c2c2c" />
<rect x="353.98" y="267.18" width="28.46" height="29.61" fill="#2c2c2c" />
<rect x="383.55" y="267.18" width="28.46" height="29.61" fill="#2c2c2c" />
<rect x="413.11" y="267.18" width="28.46" height="29.61" fill="#2c2c2c" />
<rect x="442.68" y="267.18" width="28.47" height="29.61" fill="#2c2c2c" />
<rect x="472.24" y="267.18" width="28.46" height="29.61" fill="#2c2c2c" />
<rect x="501.81" y="267.18" width="28.47" height="29.61" fill="#2c2c2c" />
<rect x="531.37" y="267.18" width="28.47" height="29.61" fill="#2c2c2c" />
<rect x="560.93" y="267.18" width="28.47" height="29.61" fill="#2c2c2c" />
<rect x="590.50" y="267.18" width="28.47" height="29.61" fill="#2c2c2c" />
<rect x="620.07" y="267.18" width="28.47" height="29.61" fill="#2c2c2c" />
<rect x="649.63" y="267.18" width="28.47" height="29.61" fill="#2c2c2c" />
<rect x="679.19" y="267.18" width="28.47" height="29.61" fill="#2c2c2c" />
<rect x="708.76" y="267.18" width="28.47" height="29.61" fill="#2c2c2c" />
<rect x="738.33" y="267.18" width="28.47" height="29.61" fill="#2c2c2c" />
<rect x="767.89" y="267.18" width="28.47" height="29.61" fill="#2c2c2c" />
<rect x="797.45" y="267.18" width="28.47" height="29.61" fill="#2c2c2c" />
<rect x="827.02" y="267.18" width="17.68" height="29.61" fill="#2c2c2c" />
<rect x="294.85" y="296.69" width="28.46" height="29.61" fill="#242424" />
<rect x="324.42" y="296.69" width="28.46" height="29.61" fill="#242424" />
<rect x="353.98" y="296.69" width="28.46" height="29.61" fill="#242424" />
<rect x="383.55" y="296.69" width="28.46" height="29.61" fill="#242424" />
<rect x="413.11" y="296.69" width="28.46" height="29.61" fill="#242424" />
<rect x="442.68" y="296.69" width="28.47" height="29.61" fill="#242424" />
<rect x="472.24" y="296.69" width="28.46" height="29.61" fill="#242424" />
<rect x="501.81" y="296.69" width="28.47" height="29.61" fill="#242424" />
<rect x="531.37" y="296.69" width="28.47" height="29.61" fill="#242424" />
<rect x="560.93" y="296.69" width="28.47" height="29.61" fill="#242424" />
<rect x="590.50" y="296.69" width="28.47" height="29.61" fill="#242424" />
<rect x="620.07" y="296.69" width="28.47" height="29.61" fill="#242424" />
<rect x="649.63" y="296.69" width="28.47" height="29.61" fill="#242424" />
<rect x="679.19" y="296.69" width="28.47" height="29.61" fill="#242424" />
<rect x="708.76" y="296.69" width="28.47" height="29.61" fill="#242424" />
<rect x="738.33" y="296.69" width="28.47" height="29.61" fill="#242424" />
<rect x="767.89" y="296.69" width="28.47" height="29.61" fill="#242424" />
<rect x="797.45" y="296.69" width="28.47" height="29.61" fill="#242424" />
<rect x="827.02" y="296.69" width="17.68" height="29.61" fill="#242424" />
<rect x="294.85" y="326.20" width="28.46" height="29.61" fill="#2c2c2c" />
<rect x="324.42" y="326.20" width="28.46" height="29.61" fill="#2c2c2c" />
<rect x="353.98" y="326.20" width="28.46" height="29.61" fill="#2c2c2c" />
<rect x="383.55" y="326.20" width="28.46" height="29.61" fill="#2c2c2c" />
<rect x="413.11" y="326.20" width="28.46" height="29.61" fill="#2c2c2c" />
<rect x="442.68" y="326.20" width="28.47" height="29.61" fill="#2c2c2c" />
<rect x="472.24" y="326.20" width="28.46" height="29.61" fill="#2c2c2c" />
<rect x="501.81" y="326.20" width="28.47" height="29.61" fill="#2c2c2c" />
<rect x="531.37" y="326.20" width="28.47" height="29.61" fill="#2c2c2c" />
<rect x="560.93" y="326.20" width="28.47" height="29.61" fill="#2c2c2c" />
<rect x="590.50" y="326.20" width="28.47" height="29.61" fill="#2c2c2c" />
<rect x="620.07" y="326.20" width="28.47" height="29.61" fill="#2c2c2c" />
<rect x="649.63" y="326.20" width="28.47" height="29.61" fill="#2c2c2c" />
<rect x="679.19" y="326.20" width="28.47" height="29.61" fill="#2c2c2c" />
<rect x="708.76" y="326.20" width="28.47" height="29.61" fill="#2c2c2c" />
<rect x="738.33" y="326.20" width="28.47" height="29.61" fill="#2c2c2c" />
<rect x="767.89" y="326.20" width="28.47" height="29.61" fill="#2c2c2c" />
<rect x="797.45" y="326.20" width="28.47" height="29.61" fill="#2c2c2c" />
<rect x="827.02" y="326.20" width="17.68" height="29.61" fill="#2c2c2c" />
<rect x="294.85" y="355.72" width="28.46" height="29.61" fill="#242424" />
<rect x="324.42" y="355.72" width="28.46" height="29.61" fill="#242424" />
<rect x="353.98" y="355.72" width="28.46" height="29.61" fill="#242424" />
<rect x="383.55" y="355.72" width="28.46" height="29.61" fill="#242424" />
<rect x="413.11" y="355.72" width="28.46" height="29.61" fill="#242424" />
<rect x="442.68" y="355.72" width="28.47" height="29.61" fill="#242424" />
<rect x="472.24" y="355.72" width="28.46" height="29.61" fill="#242424" />
<rect x="501.81" y="355.72" width="28.47" height="29.61" fill="#242424" />
<rect x="531.37" y="355.72" width="28.47" height="29.61" fill="#242424" />
<rect x="560.93" y="355.72" width="28.47" height="29.61" fill="#242424" />
<rect x="590.50" y="355.72" width="28.47" height="29.61" fill="#242424" />
<rect x="620.07" y="355.72" width="28.47" height="29.61" fill="#242424" />
<rect x="649.63" y="355.72" width="28.47" height="29.61" fill="#242424" />
<rect x="679.19" y="355.72" width="28.47" height="29.61" fill="#242424" />
<rect x="708.76" y="355.72" width="28.47" height="29.61" fill="#242424" />
<rect x="738.33" y="355.72" width="28.47" height="29.61" fill="#242424" />
<rect x="767.89" y="355.72" width="28.47" height="29.61" fill="#242424" />
<rect x="797.45" y="355.72" width="28.47" height="29.61" fill="#242424" />
<rect x="827.02" y="355.72" width="17.68" height="29.61" fill="#242424" />
<rect x="294.85" y="385.23" width="28.46" height="29.61" fill="#2c2c2c" />
<rect x="324.42" y="385.23" width="28.46" height="29.61" fill="#2c2c2c" />
<rect x="353.98" y="385.23" width="28.46" height="29.61" fill="#2c2c2c" />
<rect x="383.55" y="385.23" width="28.46" height="29.61" fill="#2c2c2c" />
<rect x="413.11" y="385.23" width="28.46" height="29.61" fill="#2c2c2c" />
<rect x="442.68" y="385.23" width="28.47" height="29.61" fill="#2c2c2c" />
<rect x="472.24" y="385.23" width="28.46" height="29.61" fill="#2c2c2c" />
<rect x="501.81" y="385.23" width="28.47" height="29.61" fill="#2c2c2c" />
<rect x="531.37" y="385.23" width="28.47" height="29.61" fill="#2c2c2c" />
<rect x="560.93" y="385.23" width="28.47" height="29.61" fill="#2c2c2c" />
<rect x="590.50" y="385.23" width="28.47" height="29.61" fill="#2c2c2c" />
<rect x="620.07" y="385.23" width="28.47" height="29.61" fill="#2c2c2c" />
<rect x="649.63" y="385.23" width="28.47" height="29.61" fill="#2c2c2c" />
<rect x="679.19" y="385.23" width="28.47" height="29.61" fill="#2c2c2c" />
<rect x="708.76" y="385.23" width="28.47" height="29.61" fill="#2c2c2c" />
<rect x="738.33" y="385.23" width="28.47" height="29.61" fill="#2c2c2c" />
<rect x="767.89" y="385.23" width="28.47" height="29.61" fill="#2c2c2c" />
<rect x="797.45" y="385.23" width="28.47" height="29.61" fill="#2c2c2c" />
<rect x="827.02" y="385.23" width="17.68" height="29.61" fill="#2c2c2c" />
<rect x="294.85" y="414.75" width="28.46" height="29.62" fill="#242424" />
<rect x="324.42" y="414.75" width="28.46" height="29.62" fill="#242424" />
<rect x="353.98" y="414.75" width="28.46" height="29.62" fill="#242424" />
<rect x="383.55" y="414.75" width="28.46" height="29.62" fill="#242424" />
<rect x="413.11" y="414.75" width="28.46" height="29.62" fill="#242424" />
<rect x="442.68" y="414.75" width="28.47" height="29.62" fill="#242424" />
<rect x="472.24" y="414.75" width="28.46" height="29.62" fill="#242424" />
<rect x="501.81" y="414.75" width="28.47" height="29.62" fill="#242424" />
<rect x="531.37" y="414.75" width="28.47" height="29.62" fill="#242424" />
<rect x="560.93" y="414.75" width="28.47" height="29.62" fill="#242424" />
<rect x="590.50" y="414.75" width="28.47" height="29.62" fill="#242424" />
<rect x="620.07" y="414.75" width="28.47" height="29.62" fill="#242424" />
<rect x="649.63" y="414.75" width="28.47" height="29.62" fill="#242424" />
<rect x="679.19" y="414.75" width="28.47" height="29.62" fill="#242424" />
<rect x="708.76" y="414.75" width="28.47" height="29.62" fill="#242424" />
<rect x="738.33" y="414.75" width="28.47" height="29.62" fill="#242424" />
<rect x="767.89" y="414.75" width="28.47" height="29.62" fill="#242424" />
<rect x="797.45" y="414.75" width="28.47" height="29.62" fill="#242424" />
<rect x="827.02" y="414.75" width="17.68" height="29.62" fill="#242424" />
<rect x="294.85" y="444.27" width="28.46" height="28.98" fill="#2c2c2c" />
<rect x="324.42" y="444.27" width="28.46" height="28.98" fill="#2c2c2c" />
<rect x="353.98" y="444.27" width="28.46" height="28.98" fill="#2c2c2c" />
<rect x="383.55" y="444.27" width="28.46" height="28.98" fill="#2c2c2c" />
<rect x="413.11" y="444.27" width="28.46" height="28.98" fill="#2c2c2c" />
<rect x="442.68" y="444.27" width="28.47" height="28.98" fill="#2c2c2c" />
<rect x="472.24" y="444.27" width="28.46" height="28.98" fill="#2c2c2c" />
<rect x="501.81" y="444.27" width="28.47" height="28.98" fill="#2c2c2c" />
<rect x="531.37" y="444.27" width="28.47" height="28.98" fill="#2c2c2c" />
<rect x="560.93" y="444.27" width="28.47" height="28.98" fill="#2c2c2c" />
<rect x="590.50" y="444.27" width="28.47" height="28.98" fill="#2c2c2c" />
<rect x="620.07" y="444.27" width="28.47" height="28.98" fill="#2c2c2c" />
<rect x="649.63" y="444.27" width="28.47" height="28.98" fill="#2c2c2c" />
<rect x="679.19" y="444.27" width="28.47" height="28.98" fill="#2c2c2c" />
<rect x="708.76" y="444.27" width="28.47" height="28.98" fill="#2c2c2c" />
<rect x="738.33" y="444.27" width="28.47" height="28.98" fill="#2c2c2c" />
<rect x="767.89" y="444.27" width="28.47" height="28.98" fill="#2c2c2c" />
<rect x="797.45" y="444.27" width="28.47" height="28.98" fill="#2c2c2c" />
<rect x="827.02" y="444.27" width="17.68" height="28.98" fill="#2c2c2c" />
<rect x="294.50" y="89.59" width="550.50" height="1.10" fill="#181818" opacity="0.8"/>
<rect x="294.50" y="119.10" width="550.50" height="1.10" fill="#181818" opacity="0.8"/>
<rect x="294.50" y="148.62" width="550.50" height="1.10" fill="#181818" opacity="0.8"/>
<rect x="294.50" y="178.13" width="550.50" height="1.10" fill="#181818" opacity="0.8"/>
<rect x="294.50" y="207.64" width="550.50" height="1.10" fill="#181818" opacity="0.8"/>
<rect x="294.50" y="237.16" width="550.50" height="1.10" fill="#181818" opacity="0.8"/>
<rect x="294.50" y="266.68" width="550.50" height="1.10" fill="#181818" opacity="0.8"/>
<rect x="294.50" y="296.19" width="550.50" height="1.10" fill="#181818" opacity="0.8"/>
<rect x="294.50" y="325.70" width="550.50" height="1.10" fill="#181818" opacity="0.8"/>
<rect x="294.50" y="355.22" width="550.50" height="1.10" fill="#181818" opacity="0.8"/>
<rect x="294.50" y="384.73" width="550.50" height="1.10" fill="#181818" opacity="0.8"/>
<rect x="294.50" y="414.25" width="550.50" height="1.10" fill="#181818" opacity="0.8"/>
<rect x="294.50" y="443.77" width="550.50" height="1.10" fill="#181818" opacity="0.8"/>
<path d="M294.30,148.87 L294.30,120.50 L530.82,120.50 L530.82,148.87 Z" fill="#6f48d8" stroke="#141414" stroke-width="0.9" stroke-opacity="1"/>
<path d="M294.30,133.95 H530.82" stroke="#1c1040" stroke-width="0.8" opacity="0.85"/>
<path d="M309.08,120.50 V133.95" stroke="#1c1040" stroke-width="0.8" opacity="0.28"/>
<path d="M323.87,120.50 V148.87" stroke="#120a2c" stroke-width="0.9"/>
<path d="M338.65,120.50 V133.95" stroke="#1c1040" stroke-width="0.8" opacity="0.9"/>
<path d="M353.43,120.50 V148.87" stroke="#120a2c" stroke-width="0.9"/>
<path d="M368.21,120.50 V133.95" stroke="#1c1040" stroke-width="0.8" opacity="0.28"/>
<path d="M383.00,120.50 V148.87" stroke="#120a2c" stroke-width="0.9"/>
<path d="M397.78,120.50 V133.95" stroke="#1c1040" stroke-width="0.8" opacity="0.9"/>
<path d="M412.56,120.50 V148.87" stroke="#120a2c" stroke-width="0.9"/>
<path d="M427.34,120.50 V133.95" stroke="#1c1040" stroke-width="0.8" opacity="0.28"/>
<path d="M442.12,120.50 V148.87" stroke="#120a2c" stroke-width="0.9"/>
<path d="M456.91,120.50 V133.95" stroke="#1c1040" stroke-width="0.8" opacity="0.9"/>
<path d="M471.69,120.50 V148.87" stroke="#120a2c" stroke-width="0.9"/>
<path d="M486.47,120.50 V133.95" stroke="#1c1040" stroke-width="0.8" opacity="0.28"/>
<path d="M501.25,120.50 V148.87" stroke="#120a2c" stroke-width="0.9"/>
<path d="M516.04,120.50 V133.95" stroke="#1c1040" stroke-width="0.8" opacity="0.9"/>
<path d="M560.38,148.87 L560.38,120.50 L796.90,120.50 L796.90,148.87 Z" fill="#6f48d8" stroke="#141414" stroke-width="0.9" stroke-opacity="1"/>
<path d="M560.38,133.95 H796.90" stroke="#1c1040" stroke-width="0.8" opacity="0.85"/>
<path d="M575.17,120.50 V133.95" stroke="#1c1040" stroke-width="0.8" opacity="0.28"/>
<path d="M589.95,120.50 V148.87" stroke="#120a2c" stroke-width="0.9"/>
<path d="M604.73,120.50 V133.95" stroke="#1c1040" stroke-width="0.8" opacity="0.9"/>
<path d="M619.52,120.50 V148.87" stroke="#120a2c" stroke-width="0.9"/>
<path d="M634.30,120.50 V133.95" stroke="#1c1040" stroke-width="0.8" opacity="0.28"/>
<path d="M649.08,120.50 V148.87" stroke="#120a2c" stroke-width="0.9"/>
<path d="M663.86,120.50 V133.95" stroke="#1c1040" stroke-width="0.8" opacity="0.9"/>
<path d="M678.64,120.50 V148.87" stroke="#120a2c" stroke-width="0.9"/>
<path d="M693.43,120.50 V133.95" stroke="#1c1040" stroke-width="0.8" opacity="0.28"/>
<path d="M708.21,120.50 V148.87" stroke="#120a2c" stroke-width="0.9"/>
<path d="M722.99,120.50 V133.95" stroke="#1c1040" stroke-width="0.8" opacity="0.9"/>
<path d="M737.78,120.50 V148.87" stroke="#120a2c" stroke-width="0.9"/>
<path d="M752.56,120.50 V133.95" stroke="#1c1040" stroke-width="0.8" opacity="0.28"/>
<path d="M767.34,120.50 V148.87" stroke="#120a2c" stroke-width="0.9"/>
<path d="M782.12,120.50 V133.95" stroke="#1c1040" stroke-width="0.8" opacity="0.9"/>
<path d="M294.30,178.38 L294.30,152.02 Q294.30,150.02 296.30,150.02 L323.87,150.02 L323.87,178.38 Z" fill="#c9521d" stroke="#141414" stroke-width="0.9" stroke-opacity="1"/>
<path d="M323.87,178.38 L323.87,152.02 Q323.87,150.02 325.87,150.02 L353.43,150.02 L353.43,178.38 Z" fill="#c9521d" stroke="#141414" stroke-width="0.9" stroke-opacity="1"/>
<path d="M353.43,163.91 L353.43,150.02 L383.00,150.02 L383.00,163.91 Z" fill="#c9521d" stroke="#141414" stroke-width="0.9" stroke-opacity="1"/>
<path d="M353.43,178.38 L353.43,164.20 L383.00,164.20 L383.00,178.38 Z" fill="#c9521d" stroke="#141414" stroke-width="0.9" stroke-opacity="1"/>
<path d="M383.00,163.91 L383.00,150.02 L412.56,150.02 L412.56,163.91 Z" fill="#c9521d" stroke="#141414" stroke-width="0.9" stroke-opacity="1"/>
<path d="M383.00,171.01 L383.00,164.20 L412.56,164.20 L412.56,171.01 Z" fill="#c9521d" stroke="#141414" stroke-width="0.9" stroke-opacity="1"/>
<path d="M383.00,178.38 L383.00,171.29 L412.56,171.29 L412.56,178.38 Z" fill="#c9521d" stroke="#141414" stroke-width="0.9" stroke-opacity="1"/>
<path d="M412.56,163.91 L412.56,150.02 L442.12,150.02 L442.12,163.91 Z" fill="#c9521d" stroke="#141414" stroke-width="0.9" stroke-opacity="1"/>
<path d="M412.56,178.38 L412.56,164.20 L442.12,164.20 L442.12,178.38 Z" fill="#c9521d" stroke="#141414" stroke-width="0.9" stroke-opacity="1"/>
<path d="M442.12,163.91 L442.12,150.02 L471.69,150.02 L471.69,163.91 Z" fill="#c9521d" stroke="#141414" stroke-width="0.9" stroke-opacity="1"/>
<path d="M442.12,178.38 L442.12,164.20 L471.69,164.20 L471.69,178.38 Z" fill="#c9521d" stroke="#141414" stroke-width="0.9" stroke-opacity="1"/>
<path d="M471.69,163.91 L471.69,150.02 L501.25,150.02 L501.25,163.91 Z" fill="#c9521d" stroke="#141414" stroke-width="0.9" stroke-opacity="1"/>
<path d="M471.69,171.01 L471.69,164.20 L501.25,164.20 L501.25,171.01 Z" fill="#c9521d" stroke="#141414" stroke-width="0.9" stroke-opacity="1"/>
<path d="M471.69,178.38 L471.69,171.29 L501.25,171.29 L501.25,178.38 Z" fill="#c9521d" stroke="#141414" stroke-width="0.9" stroke-opacity="1"/>
<path d="M501.25,163.91 L501.25,150.02 L530.82,150.02 L530.82,163.91 Z" fill="#c9521d" stroke="#141414" stroke-width="0.9" stroke-opacity="1"/>
<path d="M501.25,178.38 L501.25,164.20 L530.82,164.20 L530.82,178.38 Z" fill="#c9521d" stroke="#141414" stroke-width="0.9" stroke-opacity="1"/>
<path d="M589.95,163.91 L589.95,150.02 L619.52,150.02 L619.52,163.91 Z" fill="#c9521d" stroke="#141414" stroke-width="0.9" stroke-opacity="1"/>
<path d="M589.95,178.38 L589.95,164.20 L619.52,164.20 L619.52,178.38 Z" fill="#c9521d" stroke="#141414" stroke-width="0.9" stroke-opacity="1"/>
<path d="M619.52,163.91 L619.52,150.02 L649.08,150.02 L649.08,163.91 Z" fill="#c9521d" stroke="#141414" stroke-width="0.9" stroke-opacity="1"/>
<path d="M619.52,178.38 L619.52,164.20 L649.08,164.20 L649.08,178.38 Z" fill="#c9521d" stroke="#141414" stroke-width="0.9" stroke-opacity="1"/>
<path d="M649.08,163.91 L649.08,150.02 L678.64,150.02 L678.64,163.91 Z" fill="#c9521d" stroke="#141414" stroke-width="0.9" stroke-opacity="1"/>
<path d="M649.08,171.01 L649.08,164.20 L678.64,164.20 L678.64,171.01 Z" fill="#c9521d" stroke="#141414" stroke-width="0.9" stroke-opacity="1"/>
<path d="M649.08,178.38 L649.08,171.29 L678.64,171.29 L678.64,178.38 Z" fill="#c9521d" stroke="#141414" stroke-width="0.9" stroke-opacity="1"/>
<path d="M678.64,163.91 L678.64,150.02 L708.21,150.02 L708.21,163.91 Z" fill="#c9521d" stroke="#141414" stroke-width="0.9" stroke-opacity="1"/>
<path d="M678.64,178.38 L678.64,164.20 L708.21,164.20 L708.21,178.38 Z" fill="#c9521d" stroke="#141414" stroke-width="0.9" stroke-opacity="1"/>
<path d="M708.21,163.91 L708.21,150.02 L737.78,150.02 L737.78,163.91 Z" fill="#c9521d" stroke="#141414" stroke-width="0.9" stroke-opacity="1"/>
<path d="M708.21,178.38 L708.21,164.20 L737.78,164.20 L737.78,178.38 Z" fill="#c9521d" stroke="#141414" stroke-width="0.9" stroke-opacity="1"/>
<path d="M737.78,178.38 L737.78,152.02 Q737.78,150.02 739.78,150.02 L767.34,150.02 L767.34,178.38 Z" fill="#c9521d" stroke="#141414" stroke-width="0.9" stroke-opacity="1"/>
<path d="M767.34,178.38 L767.34,152.02 Q767.34,150.02 769.34,150.02 L796.90,150.02 L796.90,178.38 Z" fill="#c9521d" stroke="#141414" stroke-width="0.9" stroke-opacity="1"/>
<path d="M294.90,156.17 h3.4 l-3.4,3.4 z" fill="#3a1a08"/>
<rect x="297.30" y="169.40" width="1.30" height="0.80" fill="#8e3a10" />
<rect x="300.40" y="169.40" width="1.30" height="0.80" fill="#8e3a10" />
<rect x="303.50" y="169.40" width="1.30" height="0.80" fill="#8e3a10" />
<rect x="306.60" y="169.40" width="1.30" height="0.80" fill="#8e3a10" />
<rect x="309.70" y="169.40" width="1.30" height="0.80" fill="#8e3a10" />
<rect x="312.80" y="169.40" width="1.30" height="0.80" fill="#8e3a10" />
<rect x="315.90" y="169.40" width="1.30" height="0.80" fill="#8e3a10" />
<rect x="319.00" y="169.40" width="1.30" height="0.80" fill="#8e3a10" />
<path d="M324.47,156.17 h3.4 l-3.4,3.4 z" fill="#3a1a08"/>
<rect x="326.87" y="169.40" width="1.30" height="0.80" fill="#8e3a10" />
<rect x="329.97" y="169.40" width="1.30" height="0.80" fill="#8e3a10" />
<rect x="333.07" y="169.40" width="1.30" height="0.80" fill="#8e3a10" />
<rect x="336.17" y="169.40" width="1.30" height="0.80" fill="#8e3a10" />
<rect x="339.27" y="169.40" width="1.30" height="0.80" fill="#8e3a10" />
<rect x="342.37" y="169.40" width="1.30" height="0.80" fill="#8e3a10" />
<rect x="345.47" y="169.40" width="1.30" height="0.80" fill="#8e3a10" />
<rect x="348.57" y="169.40" width="1.30" height="0.80" fill="#8e3a10" />
<rect x="740.28" y="165.80" width="1.20" height="0.80" fill="#8e3a10" />
<rect x="743.18" y="165.80" width="1.20" height="0.80" fill="#8e3a10" />
<rect x="746.08" y="165.80" width="1.20" height="0.80" fill="#8e3a10" />
<rect x="748.98" y="165.80" width="1.20" height="0.80" fill="#8e3a10" />
<rect x="751.88" y="165.80" width="1.20" height="0.80" fill="#8e3a10" />
<rect x="754.77" y="165.80" width="1.20" height="0.80" fill="#8e3a10" />
<rect x="757.67" y="165.80" width="1.20" height="0.80" fill="#8e3a10" />
<rect x="760.57" y="165.80" width="1.20" height="0.80" fill="#8e3a10" />
<rect x="763.47" y="165.80" width="1.20" height="0.80" fill="#8e3a10" />
<rect x="769.84" y="165.80" width="1.20" height="0.80" fill="#8e3a10" />
<rect x="772.74" y="165.80" width="1.20" height="0.80" fill="#8e3a10" />
<rect x="775.64" y="165.80" width="1.20" height="0.80" fill="#8e3a10" />
<rect x="778.54" y="165.80" width="1.20" height="0.80" fill="#8e3a10" />
<rect x="781.44" y="165.80" width="1.20" height="0.80" fill="#8e3a10" />
<rect x="784.34" y="165.80" width="1.20" height="0.80" fill="#8e3a10" />
<rect x="787.24" y="165.80" width="1.20" height="0.80" fill="#8e3a10" />
<rect x="790.14" y="165.80" width="1.20" height="0.80" fill="#8e3a10" />
<rect x="793.04" y="165.80" width="1.20" height="0.80" fill="#8e3a10" />
<path d="M346.04,207.90 L346.04,182.03 Q346.04,179.53 348.54,179.53 L353.43,179.53 L353.43,207.90 Z" fill="#2083d2" stroke="#141414" stroke-width="0.9" stroke-opacity="1"/>
<path d="M353.43,207.90 L353.43,179.53 L412.56,179.53 L412.56,207.90 Z" fill="#2083d2" stroke="#141414" stroke-width="0.9" stroke-opacity="1"/>
<path d="M383.00,179.53 V207.90" stroke="#1a6cb0" stroke-width="0.8"/>
<rect x="354.43" y="195.00" width="1.50" height="0.80" fill="#14568e" />
<rect x="357.33" y="195.00" width="1.50" height="0.80" fill="#14568e" />
<rect x="360.23" y="195.00" width="1.50" height="0.80" fill="#14568e" />
<rect x="363.13" y="195.00" width="1.50" height="0.80" fill="#14568e" />
<rect x="366.03" y="195.00" width="1.50" height="0.80" fill="#14568e" />
<rect x="368.93" y="195.00" width="1.50" height="0.80" fill="#14568e" />
<rect x="371.83" y="195.00" width="1.50" height="0.80" fill="#14568e" />
<rect x="374.73" y="195.00" width="1.50" height="0.80" fill="#14568e" />
<rect x="377.63" y="195.00" width="1.50" height="0.80" fill="#14568e" />
<rect x="380.53" y="195.00" width="1.50" height="0.80" fill="#14568e" />
<rect x="383.43" y="195.00" width="1.50" height="0.80" fill="#14568e" />
<rect x="386.33" y="195.00" width="1.50" height="0.80" fill="#14568e" />
<rect x="389.23" y="195.00" width="1.50" height="0.80" fill="#14568e" />
<rect x="392.13" y="195.00" width="1.50" height="0.80" fill="#14568e" />
<rect x="395.03" y="195.00" width="1.50" height="0.80" fill="#14568e" />
<rect x="397.93" y="195.00" width="1.50" height="0.80" fill="#14568e" />
<rect x="400.83" y="195.00" width="1.50" height="0.80" fill="#14568e" />
<rect x="403.73" y="195.00" width="1.50" height="0.80" fill="#14568e" />
<rect x="406.63" y="195.00" width="1.50" height="0.80" fill="#14568e" />
<rect x="409.53" y="195.00" width="1.50" height="0.80" fill="#14568e" />
<path d="M412.56,188.18 L412.56,179.53 L471.69,179.53 L471.69,188.18 Z" fill="#2083d2" stroke="#141414" stroke-width="0.9" stroke-opacity="1"/>
<path d="M471.69,188.18 L471.69,179.53 L530.82,179.53 L530.82,188.18 Z" fill="#2083d2" stroke="#141414" stroke-width="0.9" stroke-opacity="1"/>
<path d="M464.89,207.90 L464.89,187.68 L471.09,187.68 L471.09,207.90 Z" fill="#2083d2" stroke="none" stroke-width="0.9" stroke-opacity="1"/>
<path d="M516.04,207.90 L516.04,187.68 L530.82,187.68 L530.82,207.90 Z" fill="#2083d2" stroke="none" stroke-width="0.9" stroke-opacity="1"/>
<path d="M582.56,207.90 L582.56,182.03 Q582.56,179.53 585.06,179.53 L589.95,179.53 L589.95,207.90 Z" fill="#2083d2" stroke="#141414" stroke-width="0.9" stroke-opacity="1"/>
<path d="M589.95,188.18 L589.95,179.53 L649.08,179.53 L649.08,188.18 Z" fill="#2083d2" stroke="#141414" stroke-width="0.9" stroke-opacity="1"/>
<path d="M649.08,188.18 L649.08,179.53 L708.21,179.53 L708.21,188.18 Z" fill="#2083d2" stroke="#141414" stroke-width="0.9" stroke-opacity="1"/>
<path d="M708.21,188.18 L708.21,179.53 L737.78,179.53 L737.78,188.18 Z" fill="#2083d2" stroke="#141414" stroke-width="0.9" stroke-opacity="1"/>
<path d="M627.50,197.68 L627.50,188.89 L671.25,188.89 L671.25,197.68 Z" fill="#2083d2" stroke="#141414" stroke-width="0.9" stroke-opacity="1"/>
<path d="M693.43,197.68 L693.43,188.89 L700.23,188.89 L700.23,197.68 Z" fill="#2083d2" stroke="#141414" stroke-width="0.9" stroke-opacity="1"/>
<path d="M701.11,197.68 L701.11,188.89 L715.31,188.89 L715.31,197.68 Z" fill="#2083d2" stroke="#141414" stroke-width="0.9" stroke-opacity="1"/>
<path d="M642.28,207.90 L642.28,198.82 L648.49,198.82 L648.49,207.90 Z" fill="#2083d2" stroke="#141414" stroke-width="0.9" stroke-opacity="1"/>
<path d="M663.86,207.90 L663.86,198.82 L708.21,198.82 L708.21,207.90 Z" fill="#2083d2" stroke="#141414" stroke-width="0.9" stroke-opacity="1"/>
<path d="M708.21,207.90 L708.21,198.82 L752.56,198.82 L752.56,207.90 Z" fill="#2083d2" stroke="#141414" stroke-width="0.9" stroke-opacity="1"/>
<path d="M759.95,207.90 L759.95,182.03 Q759.95,179.53 762.45,179.53 L767.34,179.53 L767.34,207.90 Z" fill="#2083d2" stroke="#141414" stroke-width="0.9" stroke-opacity="1"/>
<path d="M353.43,237.41 L353.43,212.44 Q353.43,209.04 356.83,209.04 L360.72,209.04 L360.72,237.41 Z" fill="#279c4b" stroke="#0d3f1d" stroke-width="0.7" stroke-opacity="1"/>
<path d="M360.82,237.41 L360.82,212.44 Q360.82,209.04 364.22,209.04 L368.11,209.04 L368.11,237.41 Z" fill="#279c4b" stroke="#0d3f1d" stroke-width="0.7" stroke-opacity="1"/>
<path d="M368.21,237.41 L368.21,212.44 Q368.21,209.04 371.61,209.04 L375.50,209.04 L375.50,237.41 Z" fill="#279c4b" stroke="#0d3f1d" stroke-width="0.7" stroke-opacity="1"/>
<path d="M375.60,237.41 L375.60,212.44 Q375.60,209.04 379.00,209.04 L382.89,209.04 L382.89,237.41 Z" fill="#279c4b" stroke="#0d3f1d" stroke-width="0.7" stroke-opacity="1"/>
<path d="M383.00,237.41 L383.00,212.44 Q383.00,209.04 386.39,209.04 L390.29,209.04 L390.29,237.41 Z" fill="#279c4b" stroke="#0d3f1d" stroke-width="0.7" stroke-opacity="1"/>
<path d="M390.39,237.41 L390.39,212.44 Q390.39,209.04 393.79,209.04 L397.68,209.04 L397.68,237.41 Z" fill="#279c4b" stroke="#0d3f1d" stroke-width="0.7" stroke-opacity="1"/>
<path d="M397.78,237.41 L397.78,212.44 Q397.78,209.04 401.18,209.04 L405.07,209.04 L405.07,237.41 Z" fill="#279c4b" stroke="#0d3f1d" stroke-width="0.7" stroke-opacity="1"/>
<path d="M405.17,237.41 L405.17,212.44 Q405.17,209.04 408.57,209.04 L412.46,209.04 L412.46,237.41 Z" fill="#279c4b" stroke="#0d3f1d" stroke-width="0.7" stroke-opacity="1"/>
<path d="M701.41,237.41 L701.41,212.44 Q701.41,209.04 704.81,209.04 L707.91,209.04 L707.91,237.41 Z" fill="#279c4b" stroke="#141414" stroke-width="0.6" stroke-opacity="1"/>
<path d="M346.04,266.93 L346.04,241.96 Q346.04,238.56 349.44,238.56 L353.13,238.56 L353.13,266.93 Z" fill="#27a6b2" stroke="#141414" stroke-width="0.6" stroke-opacity="1"/>
<path d="M353.43,266.93 L353.43,241.96 Q353.43,238.56 356.83,238.56 L360.72,238.56 L360.72,266.93 Z" fill="#27a6b2" stroke="#0c4248" stroke-width="0.7" stroke-opacity="1"/>
<path d="M360.82,266.93 L360.82,241.96 Q360.82,238.56 364.22,238.56 L368.11,238.56 L368.11,266.93 Z" fill="#27a6b2" stroke="#0c4248" stroke-width="0.7" stroke-opacity="1"/>
<path d="M368.21,266.93 L368.21,241.96 Q368.21,238.56 371.61,238.56 L375.50,238.56 L375.50,266.93 Z" fill="#27a6b2" stroke="#0c4248" stroke-width="0.7" stroke-opacity="1"/>
<path d="M375.60,266.93 L375.60,241.96 Q375.60,238.56 379.00,238.56 L382.89,238.56 L382.89,266.93 Z" fill="#27a6b2" stroke="#0c4248" stroke-width="0.7" stroke-opacity="1"/>
<path d="M383.00,266.93 L383.00,241.96 Q383.00,238.56 386.39,238.56 L390.29,238.56 L390.29,266.93 Z" fill="#27a6b2" stroke="#0c4248" stroke-width="0.7" stroke-opacity="1"/>
<path d="M390.39,266.93 L390.39,241.96 Q390.39,238.56 393.79,238.56 L397.68,238.56 L397.68,266.93 Z" fill="#27a6b2" stroke="#0c4248" stroke-width="0.7" stroke-opacity="1"/>
<path d="M397.78,266.93 L397.78,241.96 Q397.78,238.56 401.18,238.56 L405.07,238.56 L405.07,266.93 Z" fill="#27a6b2" stroke="#0c4248" stroke-width="0.7" stroke-opacity="1"/>
<path d="M405.17,266.93 L405.17,241.96 Q405.17,238.56 408.57,238.56 L412.46,238.56 L412.46,266.93 Z" fill="#27a6b2" stroke="#0c4248" stroke-width="0.7" stroke-opacity="1"/>
<path d="M435.03,266.93 L435.03,241.96 Q435.03,238.56 438.43,238.56 L441.83,238.56 L441.83,266.93 Z" fill="#27a6b2" stroke="#141414" stroke-width="0.6" stroke-opacity="1"/>
<path d="M464.59,266.93 L464.59,241.96 Q464.59,238.56 467.99,238.56 L471.39,238.56 L471.39,266.93 Z" fill="#27a6b2" stroke="#141414" stroke-width="0.6" stroke-opacity="1"/>
<path d="M494.16,266.93 L494.16,241.96 Q494.16,238.56 497.56,238.56 L500.96,238.56 L500.96,266.93 Z" fill="#27a6b2" stroke="#141414" stroke-width="0.6" stroke-opacity="1"/>
<path d="M523.72,266.93 L523.72,241.96 Q523.72,238.56 527.12,238.56 L530.52,238.56 L530.52,266.93 Z" fill="#27a6b2" stroke="#141414" stroke-width="0.6" stroke-opacity="1"/>
<path d="M589.95,266.93 L589.95,241.96 Q589.95,238.56 593.35,238.56 L596.90,238.56 L596.90,266.93 Z" fill="#27a6b2" stroke="#141414" stroke-width="0.6" stroke-opacity="1"/>
<path d="M611.98,266.93 L611.98,241.96 Q611.98,238.56 615.38,238.56 L619.37,238.56 L619.37,266.93 Z" fill="#27a6b2" stroke="#141414" stroke-width="0.6" stroke-opacity="1"/>
<path d="M641.84,266.93 L641.84,241.96 Q641.84,238.56 645.24,238.56 L648.64,238.56 L648.64,266.93 Z" fill="#27a6b2" stroke="#141414" stroke-width="0.6" stroke-opacity="1"/>
<path d="M767.34,266.93 L767.34,241.96 Q767.34,238.56 770.74,238.56 L774.44,238.56 L774.44,266.93 Z" fill="#27a6b2" stroke="#141414" stroke-width="0.6" stroke-opacity="1"/>
<path d="M789.66,266.93 L789.66,241.96 Q789.66,238.56 793.06,238.56 L796.90,238.56 L796.90,266.93 Z" fill="#27a6b2" stroke="#141414" stroke-width="0.6" stroke-opacity="1"/>
<path d="M707.41,251.16 L707.41,238.56 L713.41,238.56 L713.41,251.16 Z" fill="#27a6b2" stroke="#141414" stroke-width="0.6" stroke-opacity="1"/>
<path d="M708.41,266.93 L708.41,251.96 L715.61,251.96 L715.61,266.93 Z" fill="#27a6b2" stroke="#141414" stroke-width="0.6" stroke-opacity="1"/>
<path d="M353.43,296.44 L353.43,271.08 Q353.43,268.08 356.43,268.08 L364.92,268.08 Q367.92,268.08 367.92,271.08 L367.92,296.44 Z" fill="#27a0aa" stroke="#141414" stroke-width="0.9" stroke-opacity="1"/>
<path d="M355.5,284 h2 l1,-0.8 h2 l1.2,0.8 l1.5,-1 h2 l1,1 h1.5" fill="none" stroke="#0a2a2e" stroke-width="1.5"/>
<path d="M353.43,310.78 L353.43,297.59 L500.66,297.59 L500.66,310.78 Z" fill="#6a49da" stroke="none" stroke-width="0.9" stroke-opacity="1"/>
<path d="M361.12,325.96 L361.12,311.77 L508.05,311.77 L508.05,325.96 Z" fill="#6a49da" stroke="none" stroke-width="0.9" stroke-opacity="1"/>
<path d="M383.00,297.59 V325.96" stroke="#5a3cc0" stroke-width="0.8" opacity="0.7"/>
<path d="M412.56,297.59 V325.96" stroke="#5a3cc0" stroke-width="0.8" opacity="0.7"/>
<path d="M442.12,297.59 V325.96" stroke="#5a3cc0" stroke-width="0.8" opacity="0.7"/>
<path d="M471.69,297.59 V325.96" stroke="#5a3cc0" stroke-width="0.8" opacity="0.7"/>
<path d="M501.25,297.59 V325.96" stroke="#5a3cc0" stroke-width="0.8" opacity="0.7"/>
<path d="M324.01,355.47 L324.01,331.61 Q324.01,327.11 328.51,327.11 L348.78,327.11 Q353.28,327.11 353.28,331.61 L353.28,355.47 Z" fill="#b93ba9" stroke="#141414" stroke-width="0.5" stroke-opacity="1"/>
<rect x="326.37" y="344.80" width="1.30" height="0.70" fill="#8a2a80" />
<rect x="329.26" y="344.80" width="1.30" height="0.70" fill="#8a2a80" />
<rect x="332.16" y="344.80" width="1.30" height="0.70" fill="#8a2a80" />
<rect x="335.06" y="344.80" width="1.30" height="0.70" fill="#8a2a80" />
<rect x="337.96" y="344.80" width="1.30" height="0.70" fill="#8a2a80" />
<rect x="340.86" y="344.80" width="1.30" height="0.70" fill="#8a2a80" />
<rect x="343.76" y="344.80" width="1.30" height="0.70" fill="#8a2a80" />
<rect x="346.66" y="344.80" width="1.30" height="0.70" fill="#8a2a80" />
<rect x="349.56" y="344.80" width="1.30" height="0.70" fill="#8a2a80" />
<path d="M353.58,355.47 L353.58,331.61 Q353.58,327.11 358.08,327.11 L378.35,327.11 Q382.85,327.11 382.85,331.61 L382.85,355.47 Z" fill="#b93ba9" stroke="#141414" stroke-width="0.5" stroke-opacity="1"/>
<rect x="355.93" y="344.80" width="1.30" height="0.70" fill="#8a2a80" />
<rect x="358.83" y="344.80" width="1.30" height="0.70" fill="#8a2a80" />
<rect x="361.73" y="344.80" width="1.30" height="0.70" fill="#8a2a80" />
<rect x="364.63" y="344.80" width="1.30" height="0.70" fill="#8a2a80" />
<rect x="367.53" y="344.80" width="1.30" height="0.70" fill="#8a2a80" />
<rect x="370.43" y="344.80" width="1.30" height="0.70" fill="#8a2a80" />
<rect x="373.33" y="344.80" width="1.30" height="0.70" fill="#8a2a80" />
<rect x="376.23" y="344.80" width="1.30" height="0.70" fill="#8a2a80" />
<rect x="379.13" y="344.80" width="1.30" height="0.70" fill="#8a2a80" />
<path d="M383.14,355.47 L383.14,331.61 Q383.14,327.11 387.64,327.11 L407.91,327.11 Q412.41,327.11 412.41,331.61 L412.41,355.47 Z" fill="#b93ba9" stroke="#141414" stroke-width="0.5" stroke-opacity="1"/>
<rect x="385.50" y="344.80" width="1.30" height="0.70" fill="#8a2a80" />
<rect x="388.39" y="344.80" width="1.30" height="0.70" fill="#8a2a80" />
<rect x="391.29" y="344.80" width="1.30" height="0.70" fill="#8a2a80" />
<rect x="394.19" y="344.80" width="1.30" height="0.70" fill="#8a2a80" />
<rect x="397.09" y="344.80" width="1.30" height="0.70" fill="#8a2a80" />
<rect x="399.99" y="344.80" width="1.30" height="0.70" fill="#8a2a80" />
<rect x="402.89" y="344.80" width="1.30" height="0.70" fill="#8a2a80" />
<rect x="405.79" y="344.80" width="1.30" height="0.70" fill="#8a2a80" />
<rect x="408.69" y="344.80" width="1.30" height="0.70" fill="#8a2a80" />
<path d="M412.71,355.47 L412.71,331.61 Q412.71,327.11 417.21,327.11 L437.48,327.11 Q441.98,327.11 441.98,331.61 L441.98,355.47 Z" fill="#b93ba9" stroke="#141414" stroke-width="0.5" stroke-opacity="1"/>
<rect x="415.06" y="344.80" width="1.30" height="0.70" fill="#8a2a80" />
<rect x="417.96" y="344.80" width="1.30" height="0.70" fill="#8a2a80" />
<rect x="420.86" y="344.80" width="1.30" height="0.70" fill="#8a2a80" />
<rect x="423.76" y="344.80" width="1.30" height="0.70" fill="#8a2a80" />
<rect x="426.66" y="344.80" width="1.30" height="0.70" fill="#8a2a80" />
<rect x="429.56" y="344.80" width="1.30" height="0.70" fill="#8a2a80" />
<rect x="432.46" y="344.80" width="1.30" height="0.70" fill="#8a2a80" />
<rect x="435.36" y="344.80" width="1.30" height="0.70" fill="#8a2a80" />
<rect x="438.26" y="344.80" width="1.30" height="0.70" fill="#8a2a80" />
<path d="M442.27,355.47 L442.27,331.61 Q442.27,327.11 446.77,327.11 L467.04,327.11 Q471.54,327.11 471.54,331.61 L471.54,355.47 Z" fill="#b93ba9" stroke="#141414" stroke-width="0.5" stroke-opacity="1"/>
<rect x="444.62" y="344.80" width="1.30" height="0.70" fill="#8a2a80" />
<rect x="447.52" y="344.80" width="1.30" height="0.70" fill="#8a2a80" />
<rect x="450.42" y="344.80" width="1.30" height="0.70" fill="#8a2a80" />
<rect x="453.32" y="344.80" width="1.30" height="0.70" fill="#8a2a80" />
<rect x="456.22" y="344.80" width="1.30" height="0.70" fill="#8a2a80" />
<rect x="459.12" y="344.80" width="1.30" height="0.70" fill="#8a2a80" />
<rect x="462.02" y="344.80" width="1.30" height="0.70" fill="#8a2a80" />
<rect x="464.92" y="344.80" width="1.30" height="0.70" fill="#8a2a80" />
<rect x="467.82" y="344.80" width="1.30" height="0.70" fill="#8a2a80" />
<path d="M471.84,355.47 L471.84,331.61 Q471.84,327.11 476.34,327.11 L496.61,327.11 Q501.11,327.11 501.11,331.61 L501.11,355.47 Z" fill="#b93ba9" stroke="#141414" stroke-width="0.5" stroke-opacity="1"/>
<rect x="474.19" y="344.80" width="1.30" height="0.70" fill="#8a2a80" />
<rect x="477.09" y="344.80" width="1.30" height="0.70" fill="#8a2a80" />
<rect x="479.99" y="344.80" width="1.30" height="0.70" fill="#8a2a80" />
<rect x="482.89" y="344.80" width="1.30" height="0.70" fill="#8a2a80" />
<rect x="485.79" y="344.80" width="1.30" height="0.70" fill="#8a2a80" />
<rect x="488.69" y="344.80" width="1.30" height="0.70" fill="#8a2a80" />
<rect x="491.59" y="344.80" width="1.30" height="0.70" fill="#8a2a80" />
<rect x="494.49" y="344.80" width="1.30" height="0.70" fill="#8a2a80" />
<rect x="497.39" y="344.80" width="1.30" height="0.70" fill="#8a2a80" />
<path d="M501.40,355.47 L501.40,331.61 Q501.40,327.11 505.90,327.11 L526.17,327.11 Q530.67,327.11 530.67,331.61 L530.67,355.47 Z" fill="#b93ba9" stroke="#141414" stroke-width="0.5" stroke-opacity="1"/>
<rect x="503.75" y="344.80" width="1.30" height="0.70" fill="#8a2a80" />
<rect x="506.65" y="344.80" width="1.30" height="0.70" fill="#8a2a80" />
<rect x="509.55" y="344.80" width="1.30" height="0.70" fill="#8a2a80" />
<rect x="512.45" y="344.80" width="1.30" height="0.70" fill="#8a2a80" />
<rect x="515.35" y="344.80" width="1.30" height="0.70" fill="#8a2a80" />
<rect x="518.25" y="344.80" width="1.30" height="0.70" fill="#8a2a80" />
<rect x="521.15" y="344.80" width="1.30" height="0.70" fill="#8a2a80" />
<rect x="524.05" y="344.80" width="1.30" height="0.70" fill="#8a2a80" />
<rect x="526.95" y="344.80" width="1.30" height="0.70" fill="#8a2a80" />
<path d="M530.97,355.47 L530.97,331.61 Q530.97,327.11 535.47,327.11 L555.74,327.11 Q560.24,327.11 560.24,331.61 L560.24,355.47 Z" fill="#b93ba9" stroke="#141414" stroke-width="0.5" stroke-opacity="1"/>
<rect x="533.32" y="344.80" width="1.30" height="0.70" fill="#8a2a80" />
<rect x="536.22" y="344.80" width="1.30" height="0.70" fill="#8a2a80" />
<rect x="539.12" y="344.80" width="1.30" height="0.70" fill="#8a2a80" />
<rect x="542.02" y="344.80" width="1.30" height="0.70" fill="#8a2a80" />
<rect x="544.92" y="344.80" width="1.30" height="0.70" fill="#8a2a80" />
<rect x="547.82" y="344.80" width="1.30" height="0.70" fill="#8a2a80" />
<rect x="550.72" y="344.80" width="1.30" height="0.70" fill="#8a2a80" />
<rect x="553.62" y="344.80" width="1.30" height="0.70" fill="#8a2a80" />
<rect x="556.52" y="344.80" width="1.30" height="0.70" fill="#8a2a80" />
<path d="M590.10,355.47 L590.10,331.61 Q590.10,327.11 594.60,327.11 L614.87,327.11 Q619.37,327.11 619.37,331.61 L619.37,355.47 Z" fill="#b93ba9" stroke="#141414" stroke-width="0.5" stroke-opacity="1"/>
<rect x="592.45" y="344.80" width="1.30" height="0.70" fill="#8a2a80" />
<rect x="595.35" y="344.80" width="1.30" height="0.70" fill="#8a2a80" />
<rect x="598.25" y="344.80" width="1.30" height="0.70" fill="#8a2a80" />
<rect x="601.15" y="344.80" width="1.30" height="0.70" fill="#8a2a80" />
<rect x="604.05" y="344.80" width="1.30" height="0.70" fill="#8a2a80" />
<rect x="606.95" y="344.80" width="1.30" height="0.70" fill="#8a2a80" />
<rect x="609.85" y="344.80" width="1.30" height="0.70" fill="#8a2a80" />
<rect x="612.75" y="344.80" width="1.30" height="0.70" fill="#8a2a80" />
<rect x="615.65" y="344.80" width="1.30" height="0.70" fill="#8a2a80" />
<path d="M619.67,355.47 L619.67,331.61 Q619.67,327.11 624.17,327.11 L644.43,327.11 Q648.93,327.11 648.93,331.61 L648.93,355.47 Z" fill="#b93ba9" stroke="#141414" stroke-width="0.5" stroke-opacity="1"/>
<rect x="622.02" y="344.80" width="1.30" height="0.70" fill="#8a2a80" />
<rect x="624.92" y="344.80" width="1.30" height="0.70" fill="#8a2a80" />
<rect x="627.82" y="344.80" width="1.30" height="0.70" fill="#8a2a80" />
<rect x="630.72" y="344.80" width="1.30" height="0.70" fill="#8a2a80" />
<rect x="633.62" y="344.80" width="1.30" height="0.70" fill="#8a2a80" />
<rect x="636.51" y="344.80" width="1.30" height="0.70" fill="#8a2a80" />
<rect x="639.41" y="344.80" width="1.30" height="0.70" fill="#8a2a80" />
<rect x="642.31" y="344.80" width="1.30" height="0.70" fill="#8a2a80" />
<rect x="645.21" y="344.80" width="1.30" height="0.70" fill="#8a2a80" />
<path d="M649.23,355.47 L649.23,331.61 Q649.23,327.11 653.73,327.11 L674.00,327.11 Q678.50,327.11 678.50,331.61 L678.50,355.47 Z" fill="#b93ba9" stroke="#141414" stroke-width="0.5" stroke-opacity="1"/>
<rect x="651.58" y="344.80" width="1.30" height="0.70" fill="#8a2a80" />
<rect x="654.48" y="344.80" width="1.30" height="0.70" fill="#8a2a80" />
<rect x="657.38" y="344.80" width="1.30" height="0.70" fill="#8a2a80" />
<rect x="660.28" y="344.80" width="1.30" height="0.70" fill="#8a2a80" />
<rect x="663.18" y="344.80" width="1.30" height="0.70" fill="#8a2a80" />
<rect x="666.08" y="344.80" width="1.30" height="0.70" fill="#8a2a80" />
<rect x="668.98" y="344.80" width="1.30" height="0.70" fill="#8a2a80" />
<rect x="671.88" y="344.80" width="1.30" height="0.70" fill="#8a2a80" />
<rect x="674.78" y="344.80" width="1.30" height="0.70" fill="#8a2a80" />
<path d="M678.79,355.47 L678.79,331.61 Q678.79,327.11 683.29,327.11 L703.56,327.11 Q708.06,327.11 708.06,331.61 L708.06,355.47 Z" fill="#cf74c4" stroke="#141414" stroke-width="0.5" stroke-opacity="1"/>
<rect x="681.14" y="344.80" width="1.30" height="0.70" fill="#dca8d4" />
<rect x="684.04" y="344.80" width="1.30" height="0.70" fill="#dca8d4" />
<rect x="686.94" y="344.80" width="1.30" height="0.70" fill="#dca8d4" />
<rect x="689.84" y="344.80" width="1.30" height="0.70" fill="#dca8d4" />
<rect x="692.74" y="344.80" width="1.30" height="0.70" fill="#dca8d4" />
<rect x="695.64" y="344.80" width="1.30" height="0.70" fill="#dca8d4" />
<rect x="698.54" y="344.80" width="1.30" height="0.70" fill="#dca8d4" />
<rect x="701.44" y="344.80" width="1.30" height="0.70" fill="#dca8d4" />
<rect x="704.34" y="344.80" width="1.30" height="0.70" fill="#dca8d4" />
<path d="M708.36,355.47 L708.36,331.61 Q708.36,327.11 712.86,327.11 L733.13,327.11 Q737.63,327.11 737.63,331.61 L737.63,355.47 Z" fill="#b93ba9" stroke="#141414" stroke-width="0.5" stroke-opacity="1"/>
<rect x="710.71" y="344.80" width="1.30" height="0.70" fill="#8a2a80" />
<rect x="713.61" y="344.80" width="1.30" height="0.70" fill="#8a2a80" />
<rect x="716.51" y="344.80" width="1.30" height="0.70" fill="#8a2a80" />
<rect x="719.41" y="344.80" width="1.30" height="0.70" fill="#8a2a80" />
<rect x="722.31" y="344.80" width="1.30" height="0.70" fill="#8a2a80" />
<rect x="725.21" y="344.80" width="1.30" height="0.70" fill="#8a2a80" />
<rect x="728.11" y="344.80" width="1.30" height="0.70" fill="#8a2a80" />
<rect x="731.01" y="344.80" width="1.30" height="0.70" fill="#8a2a80" />
<rect x="733.91" y="344.80" width="1.30" height="0.70" fill="#8a2a80" />
<path d="M737.93,355.47 L737.93,331.61 Q737.93,327.11 742.43,327.11 L762.69,327.11 Q767.19,327.11 767.19,331.61 L767.19,355.47 Z" fill="#b93ba9" stroke="#141414" stroke-width="0.5" stroke-opacity="1"/>
<rect x="740.28" y="344.80" width="1.30" height="0.70" fill="#8a2a80" />
<rect x="743.18" y="344.80" width="1.30" height="0.70" fill="#8a2a80" />
<rect x="746.08" y="344.80" width="1.30" height="0.70" fill="#8a2a80" />
<rect x="748.98" y="344.80" width="1.30" height="0.70" fill="#8a2a80" />
<rect x="751.88" y="344.80" width="1.30" height="0.70" fill="#8a2a80" />
<rect x="754.77" y="344.80" width="1.30" height="0.70" fill="#8a2a80" />
<rect x="757.67" y="344.80" width="1.30" height="0.70" fill="#8a2a80" />
<rect x="760.57" y="344.80" width="1.30" height="0.70" fill="#8a2a80" />
<rect x="763.47" y="344.80" width="1.30" height="0.70" fill="#8a2a80" />
<path d="M294.30,366.32 L294.30,356.62 L456.91,356.62 L456.91,366.32 Z" fill="#d74a59" stroke="none" stroke-width="0.9" stroke-opacity="1"/>
<path d="M471.69,366.32 L471.69,356.62 L486.47,356.62 L486.47,366.32 Z" fill="#d74a59" stroke="none" stroke-width="0.9" stroke-opacity="1"/>
<path d="M501.25,366.32 L501.25,356.62 L560.38,356.62 L560.38,366.32 Z" fill="#d74a59" stroke="none" stroke-width="0.9" stroke-opacity="1"/>
<path d="M589.95,366.32 L589.95,356.62 L767.34,356.62 L767.34,366.32 Z" fill="#d74a59" stroke="none" stroke-width="0.9" stroke-opacity="1"/>
<path d="M294.30,375.97 L294.30,365.92 L309.08,365.92 L309.08,375.97 Z" fill="#d74a59" stroke="none" stroke-width="0.9" stroke-opacity="1"/>
<path d="M323.87,375.97 L323.87,365.92 L338.65,365.92 L338.65,375.97 Z" fill="#d74a59" stroke="none" stroke-width="0.9" stroke-opacity="1"/>
<path d="M353.43,375.97 L353.43,365.92 L397.78,365.92 L397.78,375.97 Z" fill="#d74a59" stroke="none" stroke-width="0.9" stroke-opacity="1"/>
<path d="M412.56,375.97 L412.56,365.92 L427.34,365.92 L427.34,375.97 Z" fill="#d74a59" stroke="none" stroke-width="0.9" stroke-opacity="1"/>
<path d="M442.12,375.97 L442.12,365.92 L516.04,365.92 L516.04,375.97 Z" fill="#d74a59" stroke="none" stroke-width="0.9" stroke-opacity="1"/>
<path d="M530.82,375.97 L530.82,365.92 L545.60,365.92 L545.60,375.97 Z" fill="#d74a59" stroke="none" stroke-width="0.9" stroke-opacity="1"/>
<path d="M589.95,375.97 L589.95,365.92 L604.73,365.92 L604.73,375.97 Z" fill="#d74a59" stroke="none" stroke-width="0.9" stroke-opacity="1"/>
<path d="M619.52,375.97 L619.52,365.92 L634.30,365.92 L634.30,375.97 Z" fill="#d74a59" stroke="none" stroke-width="0.9" stroke-opacity="1"/>
<path d="M649.08,375.97 L649.08,365.92 L663.86,365.92 L663.86,375.97 Z" fill="#d74a59" stroke="none" stroke-width="0.9" stroke-opacity="1"/>
<path d="M678.64,375.97 L678.64,365.92 L752.56,365.92 L752.56,375.97 Z" fill="#d74a59" stroke="none" stroke-width="0.9" stroke-opacity="1"/>
<path d="M294.30,384.99 L294.30,375.57 L309.08,375.57 L309.08,384.99 Z" fill="#d74a59" stroke="none" stroke-width="0.9" stroke-opacity="1"/>
<path d="M323.87,384.99 L323.87,375.57 L338.65,375.57 L338.65,384.99 Z" fill="#d74a59" stroke="none" stroke-width="0.9" stroke-opacity="1"/>
<path d="M360.82,384.99 L360.82,375.57 L375.60,375.57 L375.60,384.99 Z" fill="#d74a59" stroke="none" stroke-width="0.9" stroke-opacity="1"/>
<path d="M390.39,384.99 L390.39,375.57 L560.38,375.57 L560.38,384.99 Z" fill="#d74a59" stroke="none" stroke-width="0.9" stroke-opacity="1"/>
<path d="M589.95,384.99 L589.95,375.57 L604.73,375.57 L604.73,384.99 Z" fill="#d74a59" stroke="none" stroke-width="0.9" stroke-opacity="1"/>
<path d="M619.52,384.99 L619.52,375.57 L634.30,375.57 L634.30,384.99 Z" fill="#d74a59" stroke="none" stroke-width="0.9" stroke-opacity="1"/>
<path d="M649.08,384.99 L649.08,375.57 L663.86,375.57 L663.86,384.99 Z" fill="#d74a59" stroke="none" stroke-width="0.9" stroke-opacity="1"/>
<path d="M678.64,384.99 L678.64,375.57 L693.43,375.57 L693.43,384.99 Z" fill="#d74a59" stroke="none" stroke-width="0.9" stroke-opacity="1"/>
<path d="M708.21,384.99 L708.21,375.57 L722.99,375.57 L722.99,384.99 Z" fill="#d74a59" stroke="none" stroke-width="0.9" stroke-opacity="1"/>
<path d="M737.78,384.99 L737.78,375.57 L752.56,375.57 L752.56,384.99 Z" fill="#d74a59" stroke="none" stroke-width="0.9" stroke-opacity="1"/>
<path d="M323.87,356.62 V384.99" stroke="#3a1217" stroke-width="0.8" opacity="0.55"/>
<path d="M353.43,356.62 V384.99" stroke="#3a1217" stroke-width="0.8" opacity="0.55"/>
<path d="M383.00,356.62 V384.99" stroke="#3a1217" stroke-width="0.8" opacity="0.55"/>
<path d="M412.56,356.62 V384.99" stroke="#3a1217" stroke-width="0.8" opacity="0.55"/>
<path d="M442.12,356.62 V384.99" stroke="#3a1217" stroke-width="0.8" opacity="0.55"/>
<path d="M471.69,356.62 V384.99" stroke="#3a1217" stroke-width="0.8" opacity="0.55"/>
<path d="M501.25,356.62 V384.99" stroke="#3a1217" stroke-width="0.8" opacity="0.55"/>
<path d="M530.82,356.62 V384.99" stroke="#3a1217" stroke-width="0.8" opacity="0.55"/>
<path d="M619.52,356.62 V384.99" stroke="#3a1217" stroke-width="0.8" opacity="0.55"/>
<path d="M649.08,356.62 V384.99" stroke="#3a1217" stroke-width="0.8" opacity="0.55"/>
<path d="M678.64,356.62 V384.99" stroke="#3a1217" stroke-width="0.8" opacity="0.55"/>
<path d="M708.21,356.62 V384.99" stroke="#3a1217" stroke-width="0.8" opacity="0.55"/>
<path d="M737.78,356.62 V384.99" stroke="#3a1217" stroke-width="0.8" opacity="0.55"/>
<path d="M767.34,356.62 V384.99" stroke="#3a1217" stroke-width="0.8" opacity="0.55"/>
<rect x="295.30" y="375.17" width="11.00" height="0.90" fill="#8a1f2c" />
<rect x="324.87" y="375.17" width="11.00" height="0.90" fill="#8a1f2c" />
<rect x="590.95" y="375.17" width="11.00" height="0.90" fill="#8a1f2c" />
<rect x="620.52" y="375.17" width="11.00" height="0.90" fill="#8a1f2c" />
<rect x="650.08" y="375.17" width="11.00" height="0.90" fill="#8a1f2c" />
<rect x="679.64" y="375.17" width="11.00" height="0.90" fill="#8a1f2c" />
<rect x="709.21" y="375.17" width="11.00" height="0.90" fill="#8a1f2c" />
<rect x="738.78" y="375.17" width="11.00" height="0.90" fill="#8a1f2c" />
<path d="M767.34,384.99 L767.34,360.12 Q767.34,356.62 770.84,356.62 L793.40,356.62 Q796.90,356.62 796.90,360.12 L796.90,384.99 Z" fill="#d74a59" stroke="#141414" stroke-width="0.9" stroke-opacity="1"/>
<path d="M767.84,372.52 H796.40" stroke="#7a1a28" stroke-width="0.9" opacity="0.8"/>
<path d="M796.90,384.99 L796.90,360.12 Q796.90,356.62 800.40,356.62 L822.97,356.62 Q826.47,356.62 826.47,360.12 L826.47,384.99 Z" fill="#d74a59" stroke="#141414" stroke-width="0.9" stroke-opacity="1"/>
<path d="M797.40,372.52 H825.97" stroke="#7a1a28" stroke-width="0.9" opacity="0.8"/>
<rect x="782.50" y="372.40" width="12.30" height="1.30" fill="#6a0f1c" />
<path d="M346.04,414.50 L346.04,390.13 Q346.04,386.13 350.04,386.13 L479.08,386.13 L479.08,414.50 Z" fill="#d2581d" stroke="#141414" stroke-width="0.9" stroke-opacity="1"/>
<path d="M708.21,414.50 L708.21,390.13 Q708.21,386.13 712.21,386.13 L757.36,386.13 Q759.36,386.13 759.36,388.13 L759.36,414.50 Z" fill="#d2581d" stroke="#141414" stroke-width="0.9" stroke-opacity="1"/>
<path d="M353.43,386.13 V414.50" stroke="#b0460f" stroke-width="0.8"/>
<path d="M383.00,386.13 V414.50" stroke="#b0460f" stroke-width="0.8"/>
<path d="M412.56,386.13 V414.50" stroke="#b0460f" stroke-width="0.8"/>
<path d="M442.12,386.13 V414.50" stroke="#b0460f" stroke-width="0.8"/>
<path d="M471.69,386.13 V414.50" stroke="#b0460f" stroke-width="0.8"/>
<path d="M737.78,386.13 V414.50" stroke="#b0460f" stroke-width="0.8"/>
<path d="M348.5,400.6 h6 M360,400.8 h8 M370,400.8 h12 M383.5,401 h6.5 l1.2,1 h16 l1.2,-1 h33 M445,400.8 h16 M463.5,401 l1.2,1 h12.6" fill="none" stroke="#7a2a08" stroke-width="1.35"/>
<path d="M711,400.8 h9 M722,401 h10 l1,0.8 h17" fill="none" stroke="#7a2a08" stroke-width="1.35"/>
<path d="M338.65,444.01 L338.65,418.65 Q338.65,415.65 341.65,415.65 L397.78,415.65 L397.78,444.01 Z" fill="#7b9b2a" stroke="#141414" stroke-width="0.9" stroke-opacity="1"/>
<path d="M642.28,444.01 L642.28,418.65 Q642.28,415.65 645.28,415.65 L700.52,415.65 L700.52,444.01 Z" fill="#7b9b2a" stroke="#141414" stroke-width="0.9" stroke-opacity="1"/>
<path d="M353.43,415.65 V444.01" stroke="#6f8e24" stroke-width="0.7"/>
<path d="M383.00,415.65 V444.01" stroke="#6f8e24" stroke-width="0.7"/>
<path d="M649.08,415.65 V444.01" stroke="#6f8e24" stroke-width="0.7"/>
<path d="M678.64,415.65 V444.01" stroke="#6f8e24" stroke-width="0.7"/>
<rect x="343.50" y="430.60" width="1.20" height="0.70" fill="#4a6012" />
<rect x="356.50" y="430.60" width="1.30" height="0.70" fill="#4a6012" />
<rect x="359.60" y="430.60" width="1.30" height="0.70" fill="#4a6012" />
<rect x="362.70" y="430.60" width="1.30" height="0.70" fill="#4a6012" />
<rect x="365.80" y="430.60" width="1.30" height="0.70" fill="#4a6012" />
<rect x="368.90" y="430.60" width="1.30" height="0.70" fill="#4a6012" />
<rect x="372.00" y="430.60" width="1.30" height="0.70" fill="#4a6012" />
<rect x="375.10" y="430.60" width="1.30" height="0.70" fill="#4a6012" />
<rect x="378.20" y="430.60" width="1.30" height="0.70" fill="#4a6012" />
<rect x="381.30" y="430.60" width="1.30" height="0.70" fill="#4a6012" />
<rect x="384.40" y="430.60" width="1.30" height="0.70" fill="#4a6012" />
<rect x="387.50" y="430.60" width="1.30" height="0.70" fill="#4a6012" />
<rect x="390.60" y="430.60" width="1.30" height="0.70" fill="#4a6012" />
<rect x="647.50" y="430.60" width="1.20" height="0.70" fill="#4a6012" />
<rect x="660.50" y="430.60" width="1.30" height="0.70" fill="#4a6012" />
<rect x="663.60" y="430.60" width="1.30" height="0.70" fill="#4a6012" />
<rect x="666.70" y="430.60" width="1.30" height="0.70" fill="#4a6012" />
<rect x="669.80" y="430.60" width="1.30" height="0.70" fill="#4a6012" />
<rect x="672.90" y="430.60" width="1.30" height="0.70" fill="#4a6012" />
<rect x="676.00" y="430.60" width="1.30" height="0.70" fill="#4a6012" />
<rect x="679.10" y="430.60" width="1.30" height="0.70" fill="#4a6012" />
<rect x="682.20" y="430.60" width="1.30" height="0.70" fill="#4a6012" />
<rect x="685.30" y="430.60" width="1.30" height="0.70" fill="#4a6012" />
<rect x="688.40" y="430.60" width="1.30" height="0.70" fill="#4a6012" />
<rect x="691.50" y="430.60" width="1.30" height="0.70" fill="#4a6012" />
<rect x="694.60" y="430.60" width="1.30" height="0.70" fill="#4a6012" />
<path d="M353.43,473.53 L353.43,447.67 Q353.43,445.17 355.93,445.17 L359.93,445.17 L359.93,473.53 Z" fill="#22a457" stroke="#141414" stroke-width="0.6" stroke-opacity="1"/>
<path d="M361.12,473.53 L361.12,447.67 Q361.12,445.17 363.62,445.17 L367.92,445.17 L367.92,473.53 Z" fill="#22a457" stroke="#141414" stroke-width="0.6" stroke-opacity="1"/>
<rect x="646.50" y="446.40" width="2.00" height="26.20" fill="#25a65c" />
<rect x="705.40" y="446.40" width="2.20" height="26.20" fill="#25a65c" />
<rect x="822.40" y="254.10" width="19.40" height="34.10" fill="#0a0a0a" opacity="0.6"/>
<rect x="823.00" y="254.50" width="17.80" height="32.50" fill="#e6e6e6" />
<path d="M831.9,262.6 l3.9,5 h-7.8 z M831.9,279 l3.9,-5 h-7.8 z" fill="#111"/>
<rect x="525.10" y="452.20" width="33.10" height="19.20" fill="#0a0a0a" opacity="0.6"/>
<rect x="525.70" y="452.60" width="31.50" height="17.60" fill="#e6e6e6" />
<path d="M530.6,461.5 l4.4,-2.7 v5.4 z" fill="#111"/>
<rect x="538.2" y="457.2" width="14.2" height="8.8" fill="none" stroke="#222" stroke-width="1"/>
<rect x="537.20" y="456.70" width="2.00" height="9.80" fill="#222" />
<path d="M544.8,461.5 l-4.6,-2.8 v5.6 z" fill="#111"/>
<rect x="581.30" y="452.20" width="32.80" height="19.20" fill="#0a0a0a" opacity="0.6"/>
<rect x="581.90" y="452.60" width="31.20" height="17.60" fill="#e6e6e6" />
<rect x="588.4" y="457.2" width="14.4" height="8.8" fill="none" stroke="#222" stroke-width="1"/>
<rect x="602.30" y="456.70" width="2.00" height="9.80" fill="#222" />
<path d="M596.9,461.5 l4.5,-2.8 v5.6 z" fill="#111"/>
<path d="M610,461.5 l-4.6,-2.8 v5.6 z" fill="#111"/>
<rect x="845.20" y="66.60" width="25.80" height="407.60" fill="#181818" />
<rect x="845.60" y="67.70" width="25.40" height="33.50" fill="#333" />
<rect x="845.60" y="102.80" width="25.40" height="33.20" fill="#333" />
<rect x="845.60" y="141.50" width="25.40" height="311.80" fill="#333" />
<rect x="845.60" y="453.40" width="25.40" height="19.80" fill="#1d1d1d" />
<path d="M855.7,84.5 h5.4 M858.4,81.8 v5.4" stroke="#d0d0d0" stroke-width="1.5"/>
<path d="M855.6,119.4 h5.6" stroke="#d0d0d0" stroke-width="1.5"/>
<path d="M855.8,295 h5.4 M855.8,297.1 h5.4 M855.8,299.2 h5.4" stroke="#9a9a9a" stroke-width="1"/>
<rect x="153.00" y="473.60" width="718.00" height="28.40" fill="#0e0e0e" />
<rect x="153.00" y="474.60" width="141.20" height="26.20" fill="#1b1b1b" />
<text x="158.50" y="486.50" font-size="8.8" fill="#d4d4d4" text-anchor="start" textLength="41.5" lengthAdjust="spacingAndGlyphs" >1 part selected</text>
<text x="158.50" y="496.10" font-size="8.8" fill="#d4d4d4" text-anchor="start" textLength="84.8" lengthAdjust="spacingAndGlyphs" >53.01.00 - 57.01.00 [4.00.00]</text>
<rect x="294.50" y="475.60" width="515.00" height="25.00" fill="#1b1b1b" />
<rect x="294.50" y="475.60" width="118.00" height="25.00" fill="#303030" />
<rect x="293.10" y="473.00" width="1.60" height="63.00" fill="#060606" />
<path d="M351.2,485.6 v5 M352.8,485.6 v5 M354.4,485.6 v5" stroke="#8a8a8a" stroke-width="0.9"/>
<rect x="775.00" y="475.60" width="34.60" height="25.00" fill="#323232" />
<rect x="811.20" y="475.60" width="33.40" height="25.00" fill="#323232" />
<rect x="846.20" y="475.60" width="24.80" height="25.00" fill="#323232" />
<path d="M789.8,488.3 h5.4 M792.5,485.6 v5.4" stroke="#d0d0d0" stroke-width="1.5"/>
<path d="M824.8,488.3 h5.6" stroke="#d0d0d0" stroke-width="1.5"/>
<path d="M856.6,486.2 h3 v1.4 l1.6,1.6 v1.4 h-1.4 l-1.6,-1.6 h-1.6 z" fill="#c0c0c0"/>
<rect x="153.00" y="501.80" width="718.00" height="34.20" fill="#212121" />
<rect x="293.20" y="501.80" width="1.60" height="34.20" fill="#0c0c0c" />
<rect x="365.96" y="501.80" width="1.20" height="34.20" fill="#141414" />
<rect x="438.02" y="501.80" width="1.20" height="34.20" fill="#141414" />
<rect x="510.08" y="501.80" width="1.20" height="34.20" fill="#141414" />
<rect x="582.14" y="501.80" width="1.20" height="34.20" fill="#141414" />
<rect x="654.20" y="501.80" width="1.20" height="34.20" fill="#141414" />
<rect x="726.26" y="501.80" width="1.20" height="34.20" fill="#141414" />
<rect x="798.32" y="501.80" width="1.20" height="34.20" fill="#141414" />
<circle cx="176.5" cy="519" r="6.2" fill="#bdbdbd"/>
<path d="M172.8,519 h7.4 M176.5,515.3 v7.4" stroke="#212121" stroke-width="1.9"/>
<path d="M185.8,522.6 h4 l-2,3 z" fill="#bdbdbd"/>
<circle cx="224" cy="519" r="6.6" fill="#ea5260"/>
<rect x="220.00" y="518.00" width="8.00" height="2.00" fill="#212121" />
<path d="M275.8,518.4 v6.4 h-10.4 v-10.4 h7" fill="none" stroke="#bdbdbd" stroke-width="1.4"/>
<path d="M267.6,517.6 l2.8,3.4 l6,-8" fill="none" stroke="#bdbdbd" stroke-width="1.5"/>
<text x="329.50" y="531.10" font-size="8.1" fill="#bcbcbc" text-anchor="middle" textLength="15.0" lengthAdjust="spacingAndGlyphs" >GRID</text>
<text x="402.20" y="531.10" font-size="8.1" fill="#bcbcbc" text-anchor="middle" textLength="19.5" lengthAdjust="spacingAndGlyphs" >ZOOM</text>
<text x="474.70" y="531.10" font-size="8.1" fill="#bcbcbc" text-anchor="middle" textLength="22.0" lengthAdjust="spacingAndGlyphs" >SELECT</text>
<text x="547.00" y="531.10" font-size="8.1" fill="#bcbcbc" text-anchor="middle" textLength="20.0" lengthAdjust="spacingAndGlyphs" >DRAW</text>
<text x="618.70" y="531.10" font-size="8.1" fill="#bcbcbc" text-anchor="middle" textLength="23.6" lengthAdjust="spacingAndGlyphs" >DELETE</text>
<text x="691.00" y="531.10" font-size="8.1" fill="#bcbcbc" text-anchor="middle" textLength="32.4" lengthAdjust="spacingAndGlyphs" >DUPLICATE</text>
<text x="763.80" y="531.10" font-size="8.1" fill="#bcbcbc" text-anchor="middle" textLength="25.6" lengthAdjust="spacingAndGlyphs" >ACTIONS</text>
<text x="835.70" y="531.10" font-size="8.1" fill="#bcbcbc" text-anchor="middle" textLength="38.0" lengthAdjust="spacingAndGlyphs" >PROPERTIES</text>
<circle cx="302" cy="507.3" r="2.4" fill="#2b8fe0"/>
<g stroke="#2b7cc2" fill="none"><path d="M323.2,510.7 h13.4 M323.2,516.2 h13.4" stroke-width="1.9"/><path d="M325.6,508.3 v10 M329.9,508.3 v10 M334.2,508.3 v10" stroke-width="1.1"/></g>
<circle cx="399.9" cy="512" r="3.4" fill="none" stroke="#8a56d0" stroke-width="1.5"/><path d="M402.4,514.6 L407.4,519.4" stroke="#8a56d0" stroke-width="2"/>
<rect x="467.5" y="508.8" width="11.6" height="8.2" fill="none" stroke="#cc44bb" stroke-width="1.5" stroke-dasharray="2.2,1.1"/>
<path d="M477.2,517 h5 M479.7,514.5 v5" stroke="#cc44bb" stroke-width="1.3"/>
<path d="M550.2,508.6 l2.2,2.2 l-7.6,7.4 l-3.2,1.2 l1,-3.4 z" fill="#e2621f"/>
<path d="M614.2,508.6 L624.4,518.6 M624.4,508.6 L614.2,518.6" stroke="#e0505a" stroke-width="1.3"/>
<path d="M686,508.2 h5 l2,2 v6.6 h-7 z" fill="#86b42c"/><path d="M689.4,510.6 h5.2 l2,2 v6.6 h-7.2 z" fill="#9cc63a" stroke="#1e1e1e" stroke-width="0.6"/>
<path d="M663.6,506 l2,3 h-4 z" fill="#9ab83a"/>
<path d="M763.2,513.4 L769.3,518.9" stroke="#27ae60" stroke-width="2.5"/>
<path d="M759.3,508.3 A2.9,2.9 0 1 0 762.3,508.4" fill="none" stroke="#27ae60" stroke-width="2.1"/>
<rect x="829.40" y="509.20" width="1.80" height="2.00" fill="#2a9fb2" />
<rect x="832.40" y="509.20" width="10.80" height="2.00" fill="#2a9fb2" />
<rect x="829.40" y="512.90" width="1.80" height="2.00" fill="#2a9fb2" />
<rect x="832.40" y="512.90" width="10.80" height="2.00" fill="#2a9fb2" />
<rect x="829.40" y="516.60" width="1.80" height="2.00" fill="#2a9fb2" />
<rect x="832.40" y="516.60" width="10.80" height="2.00" fill="#2a9fb2" />
</g></svg></body></html>
